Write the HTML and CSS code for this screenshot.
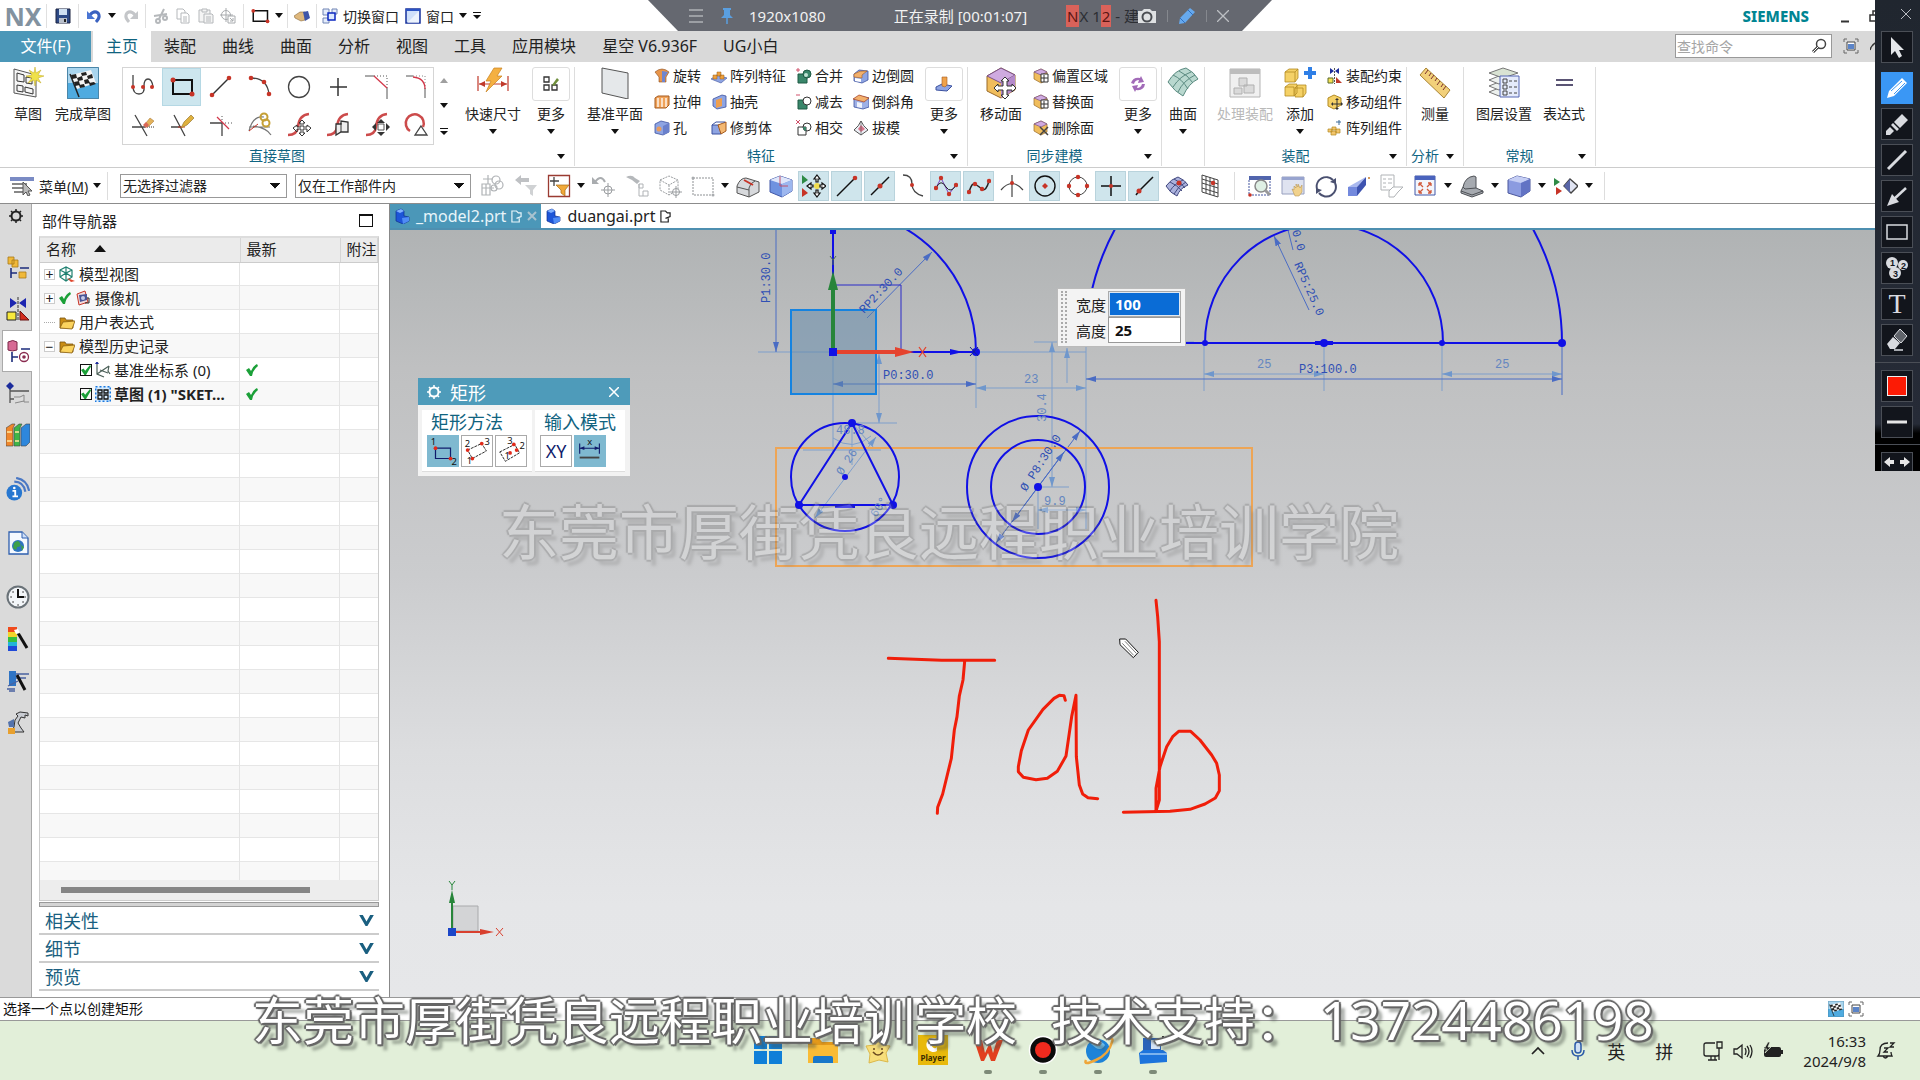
FILE: index.html
```html
<!DOCTYPE html>
<html lang="zh-CN">
<head>
  <meta charset="UTF-8">
  <meta name="viewport" content="width=device-width, initial-scale=1.0">
  <title>NX 12 - 建模</title>
  <link rel="stylesheet" href="styles.css">
</head>
<body>

<!-- Icon sprite -->
<svg class="sprite" aria-hidden="true">
  <symbol id="caret" viewBox="0 0 8 5"><path d="M0 0h8L4 5z" fill="#111"/></symbol>
  <symbol id="caret-line" viewBox="0 0 8 7"><path d="M0 0h8v1H0zM0 3h8L4 7z" fill="#111"/></symbol>
  <symbol id="save" viewBox="0 0 16 16"><path d="M1 1h14v14H1z" fill="#2e4a86" stroke="#1b2340"/><path d="M4 1h8v6H4z" fill="#cfe0f2"/><path d="M4 10h8v5H4z" fill="#b9c0cc"/><path d="M9 11h2v3H9z" fill="#222"/></symbol>
  <symbol id="undo" viewBox="0 0 16 16"><path d="M4 7q4-5 8-2 3 4-2 9" fill="none" stroke="#3b62c0" stroke-width="3"/><path d="M1 3v8h8z" fill="#4a76d4"/></symbol>
  <symbol id="redo" viewBox="0 0 16 16"><path d="M12 7Q8 2 4 5q-3 4 2 9" fill="none" stroke="#c4c6c9" stroke-width="3"/><path d="M15 3v8H7z" fill="#c4c6c9"/></symbol>
  <symbol id="cut" viewBox="0 0 16 16"><g fill="none" stroke="#b5b8bb" stroke-width="2"><path d="M11 1 6 11M1 8l13-2"/><circle cx="5" cy="13" r="2"/><circle cx="12" cy="10" r="2"/></g></symbol>
  <symbol id="copy" viewBox="0 0 16 16"><g fill="#fff" stroke="#b5b8bb"><path d="M2 1h6l2 2v8H2z"/><path d="M6 5h6l2 2v8H6z"/><path d="M8 9h4M8 11h4M8 13h4"/></g></symbol>
  <symbol id="paste" viewBox="0 0 16 16"><g fill="#f4f4f4" stroke="#b5b8bb"><path d="M1 2h11v12H1z"/><path d="M4 1h5v3H4zM6 6h8l1 1v8H6z"/><path d="M8 9h5M8 11h5M8 13h5"/></g></symbol>
  <symbol id="target" viewBox="0 0 16 16"><g fill="none" stroke="#a8abae"><circle cx="6" cy="7" r="4.500"/><path d="M6 0v14M0 7h13"/><path d="M8 8h7v7H8z" fill="#fff"/><path d="m10 10 3 3m0-3v3h-3"/></g></symbol>
  <symbol id="rect" viewBox="0 0 32 32"><path d="M7 9h19v14H7z" fill="none" stroke="#111" stroke-width="2"/><circle cx="7" cy="9" r="2.500" fill="#c73427"/><circle cx="26" cy="23" r="2.500" fill="#c73427"/></symbol>
  <symbol id="hand" viewBox="0 0 16 16"><path d="M0 8 6 4l5 0v8l-4 1-6-3z" fill="#dfb87c" stroke="#8a6a3c" stroke-width=".6"/><path d="m9 4 5-1 2 7-5 3z" fill="#3f55a8"/></symbol>
  <symbol id="switchwin" viewBox="0 0 16 16"><g fill="#e4ecfb" stroke="#7185b4"><path d="M1 1h6v6H1zM10 1h5v5h-5zM1 10h6v5H1z"/></g><path d="M6 5h7v7H6z" fill="#dce9ff" stroke="#0b27c0" stroke-width="1.500"/></symbol>
  <symbol id="window" viewBox="0 0 16 16"><path d="M1 1h14v14H1z" fill="#cfe0fa" stroke="#16309c" stroke-width="1.500"/><path d="M1 1h14v2H1z" fill="#2b53c4"/><path d="M2 15 14 3v12z" fill="#fff" opacity=".6"/></symbol>

  <symbol id="sketch" viewBox="0 0 32 32"><path d="m2 2 22 6v22L2 26z" fill="#f6f6f6" stroke="#555"/><g fill="none" stroke="#333"><path d="m5 6 7 2v7l-7-1zM14 10l6 1v6l-6-1zM5 18l6 1v6l-6-1zM13 20l8 2v5l-8-2z"/></g><path d="m23 0 1 6 5-3-3 5 6 1-6 2 3 5-5-3-1 6-1-6-6 3 4-5-6-2 6-1-3-5 5 3z" fill="#efe14a" stroke="#c1a922" stroke-width=".5"/></symbol>
  <symbol id="finish" viewBox="0 0 32 32"><path d="M0 0h32v32H0z" fill="#4fabe0"/><path d="M0 0h32v16H0z" fill="#a9d5ee"/><path d="M.5.5h31v31H.5z" fill="none" stroke="#4b86a8"/><path d="m4 8 20-5 5 13-19 6z" fill="#f5f5f5"/><g fill="#222"><path d="m4 8 5-1 1 4-5 1zM14 6l5-1 1 3-5 1zM10 11l5-2 1 4-5 1zM20 9l5-2 1 4-5 1zM7 15l5-1 1 4-5 1zM17 13l4-1 2 4-5 1zM12 18l5-1 1 3-5 1zM22 16l5-1 2 2-6 2z"/></g><path d="m3 7 9 23" stroke="#222" stroke-width="1.500"/></symbol>
  <symbol id="profile" viewBox="0 0 32 32"><path d="M6 4v11q0 8 6 8t5-8q0-7 4-7t5 8" fill="none" stroke="#444" stroke-width="1.300"/><g fill="#c73427"><circle cx="6" cy="16" r="2"/><circle cx="16" cy="16" r="2"/><circle cx="25" cy="16" r="2"/></g></symbol>
  <symbol id="line" viewBox="0 0 32 32"><path d="M7 24 24 7" stroke="#333" stroke-width="1.500"/><circle cx="7" cy="24" r="2.300" fill="#c73427"/><circle cx="24" cy="7" r="2.300" fill="#c73427"/></symbol>
  <symbol id="arc" viewBox="0 0 32 32"><path d="M7 7q16 0 18 16" fill="none" stroke="#444" stroke-width="1.300"/><g fill="#c73427"><circle cx="7" cy="7" r="2.300"/><circle cx="20" cy="11" r="2.300"/><circle cx="25" cy="23" r="2.300"/></g></symbol>
  <symbol id="circle" viewBox="0 0 32 32"><circle cx="16" cy="16" r="10.500" fill="none" stroke="#444" stroke-width="1.300"/></symbol>
  <symbol id="plus" viewBox="0 0 32 32"><path d="M16 7v18M8 16h17" stroke="#333" stroke-width="1.500"/></symbol>
  <symbol id="chamfer2" viewBox="0 0 32 32"><path d="M4 5h9M26 17v11" stroke="#555"/><path d="M13 5h13v12" fill="none" stroke="#555" stroke-dasharray="1 2"/><path d="m13 5 13 12" stroke="#d2384a" stroke-width="1.300"/></symbol>
  <symbol id="fillet2" viewBox="0 0 32 32"><path d="M6 5h7M25 17v10" stroke="#555"/><path d="M13 5h12v12" fill="none" stroke="#888" stroke-dasharray="1 2"/><path d="M13 6q12 1 12 12" fill="none" stroke="#d2384a" stroke-width="1.300"/></symbol>
  <symbol id="trim" viewBox="0 0 32 32"><path d="m8 6 12 21M5 18h13" stroke="#444" stroke-width="1.300"/><path d="M18 18h9" stroke="#333" stroke-dasharray="1 1"/><path d="m18 15 5-6 4 3-6 6z" fill="#e3b25a" stroke="#a16f2c" stroke-width=".5"/><path d="m16 16 3-3 3 3-3 3z" fill="#d96757"/></symbol>
  <symbol id="extend" viewBox="0 0 32 32"><path d="m8 6 11 21M5 18h10" stroke="#444" stroke-width="1.300"/><path d="M12 18h7" stroke="#c73427"/><path d="m15 19 3-6 7-7 3 3-7 7z" fill="#dfb13e" stroke="#8b6a22" stroke-width=".6"/></symbol>
  <symbol id="corner" viewBox="0 0 32 32"><path d="M5 14h12v13" fill="none" stroke="#444" stroke-width="1.300"/><path d="M17 14V5M17 14h10" stroke="#555" stroke-dasharray="1 2"/><path d="m12 8 12 12" stroke="#d2384a" stroke-width="1.300"/></symbol>
  <symbol id="constr" viewBox="0 0 32 32"><path d="M5 18h21M5 22Q9 6 20 8M9 17q14 2 18 9" fill="none" stroke="#777" stroke-width="1.200"/><path d="m5 22 9-7" stroke="#c73427"/><g fill="none" stroke="#c5a036" stroke-width="2"><circle cx="20" cy="8" r="3.500"/><circle cx="22" cy="14" r="3.500"/></g></symbol>
  <symbol id="movecurve" viewBox="0 0 32 32"><path d="M5 26q9 0 10-8Q16 6 26 5" fill="none" stroke="#cc4b4b" stroke-width="2.500"/><path d="m19 11 3 3h-2v4h4v-2l4 3-4 4v-3h-4v4h2l-3 3-3-3h2v-4h-4v3l-4-4 4-3v2h4v-4h-2z" fill="#fff" stroke="#333"/></symbol>
  <symbol id="offcurve" viewBox="0 0 32 32"><path d="M5 26q9 0 10-8Q16 6 26 5" fill="none" stroke="#cc4b4b" stroke-width="2.500"/><path d="M14 15h5v-3l7 1v10h-7l-5 3z" fill="#eee" stroke="#333" stroke-width="1.300"/><path d="M19 14v9" stroke="#333"/></symbol>
  <symbol id="scalecurve" viewBox="0 0 32 32"><path d="M5 26q9 0 10-8Q16 6 26 5" fill="none" stroke="#cc4b4b" stroke-width="2.500"/><path d="m20 10 4 4h-8zM20 27l4-4h-8zM11 18l4-4v8zM29 18l-4-4v8z" fill="#333"/><path d="M17 15h6v6h-6z" fill="#fff" stroke="#555"/></symbol>
  <symbol id="polycurve" viewBox="0 0 32 32"><path d="M10 22A9 9 0 1 1 23 18" fill="none" stroke="#cc4b4b" stroke-width="2.500"/><path d="m21 17 6 9H15z" fill="#fff" stroke="#444" stroke-width="1.300"/></symbol>
  <symbol id="dim" viewBox="0 0 32 32"><path d="M1 9v15M31 9v15" stroke="#c0392b" stroke-width="1.200"/><path d="M2 17h28" stroke="#c0392b"/><path d="m2 17 6-3v6zM30 17l-6-3v6z" fill="#c0392b"/><path d="M17 1h8l-5 8h5L9 25l5-11H9z" fill="#f4b042" stroke="#c9811d" stroke-width=".7"/></symbol>
  <symbol id="moresk" viewBox="0 0 24 24"><g fill="none" stroke="#333" stroke-width="1.300"><path d="M5 5h5v5H5zM5 13h5v5H5zM13 18v-5l5 0v5z"/></g><path d="m13 13 5-7 2 2-5 6z" fill="#6f8f3c"/></symbol>
  <symbol id="plane" viewBox="0 0 32 32"><path d="m3 1 26 5v26L3 26z" fill="#e5e8ea" stroke="#555"/></symbol>

  <symbol id="revolve" viewBox="0 0 16 16"><path d="M1 4Q8-2 15 4l-3 5v5H5V9z" fill="#e8954a" stroke="#8a4a1a" stroke-width=".6"/><path d="m8 3 6 1-3 5v5H8z" fill="#6f86d0"/></symbol>
  <symbol id="extrude" viewBox="0 0 16 16"><path d="M1 4 4 2h11v9l-3 3H1z" fill="#f0a35a" stroke="#a55a1e"/><path d="M4 4v9M8 4v9M12 4v9" stroke="#fff" stroke-width="1.300"/></symbol>
  <symbol id="hole" viewBox="0 0 16 16"><path d="m1 4 6-3 8 2v9l-6 3-8-2z" fill="#8ea4e2" stroke="#3c52a0" stroke-width=".8"/><path d="m9 6 6-3v9l-6 3z" fill="#6a80cc"/><circle cx="5" cy="9" r="2.500" fill="#e89c5c"/></symbol>
  <symbol id="pattern" viewBox="0 0 16 16"><path d="m0 11 6-4 10 3-6 5z" fill="#8ea4e2" stroke="#3c52a0" stroke-width=".6"/><g fill="#eda03e" stroke="#9a5c14" stroke-width=".5"><path d="M2 7h4v4H2zM6 4h4v4H6zM9 7h4v4H9z"/></g></symbol>
  <symbol id="shell" viewBox="0 0 16 16"><path d="m2 5 9-4 4 1v11l-9 2-4-3z" fill="#8ea4e2" stroke="#3c52a0" stroke-width=".8"/><path d="m5 6 6-2v8l-6 2z" fill="#ee9f4f"/></symbol>
  <symbol id="trimbody" viewBox="0 0 16 16"><path d="M1 5h9v9H1z" fill="#8ea4e2" stroke="#3c52a0"/><path d="m7 5 8-3v9l-5 3z" fill="#f4b872" stroke="#a55a1e"/><path d="M1 5 5 2h9" fill="none" stroke="#3c52a0"/></symbol>
  <symbol id="unite" viewBox="0 0 16 16"><path d="M0 2h4M2 0v4" stroke="#d0506a"/><path d="M2 6h9v9H2z" fill="#39866a" stroke="#1e5a44"/><circle cx="11" cy="6" r="4" fill="#39866a" stroke="#1e5a44"/><circle cx="10" cy="7" r="2" fill="#bfe3d4"/></symbol>
  <symbol id="subtract" viewBox="0 0 16 16"><path d="M0 1h4" stroke="#d0506a"/><path d="M2 6h9v9H2z" fill="#39866a" stroke="#1e5a44"/><circle cx="11" cy="7" r="4" fill="#fff" stroke="#333"/></symbol>
  <symbol id="intersect" viewBox="0 0 16 16"><path d="m0 0 4 4M4 0 0 4" stroke="#d0506a"/><path d="M2 7h8v8H2z" fill="#fff" stroke="#333"/><circle cx="11" cy="7" r="4" fill="none" stroke="#333"/><path d="M7 7h3v4q-3-1-3-4" fill="#39866a"/></symbol>
  <symbol id="edgeblend" viewBox="0 0 16 16"><path d="m1 6 5-4 9 1v9l-6 3-8-2z" fill="#8ea4e2" stroke="#3c52a0" stroke-width=".8"/><path d="M1 6q6-4 13-3l-5 4v3l-8-1z" fill="#f2b06c" stroke="#a55a1e" stroke-width=".6"/><path d="m2 10 6 1v3l-6-1z" fill="#fff"/></symbol>
  <symbol id="chamfer" viewBox="0 0 16 16"><path d="m1 5 6-3 9 2v9l-6 2-9-2z" fill="#9db0e6" stroke="#3c52a0" stroke-width=".8"/><path d="m0 5 6-4 10 3-5 4z" fill="#f2b06c" stroke="#a53a1e" stroke-width=".7"/><path d="m4 8 5 1v5l-5-1z" fill="#eef2fc"/></symbol>
  <symbol id="draft" viewBox="0 0 16 16"><path d="M8 1q-2 5-7 9l7 5 7-5Q10 6 8 1z" fill="#eceff5" stroke="#555"/><path d="m5 9 3-4 4 4-4 3z" fill="#d7768b"/><path d="M8 1v14" stroke="#555" stroke-width=".6"/></symbol>
  <symbol id="emboss" viewBox="0 0 24 24"><path d="m4 15 6-3 10 2-5 5-11-1z" fill="#8ea4e2" stroke="#3c52a0"/><path d="M10 5h5v8l-2 2-3-1z" fill="#efa24a" stroke="#a55a1e" stroke-width=".6"/></symbol>
  <symbol id="moveface" viewBox="0 0 32 32"><path d="m2 9 14-8 14 7v15l-14 8L2 24z" fill="#f0bd5c" stroke="#996a28"/><path d="m2 9 14-8 14 7-14 8z" fill="#cfaae0" stroke="#78518a"/><path d="m16 16 14-8v15l-14 8z" fill="#b58acb"/><path d="m20 10 4 4h-2v5h5v-2l4 4-4 4v-2h-5v5h2l-4 4-4-4h2v-5h-5v2l-4-4 4-4v2h5v-5h-2z" fill="#fff" stroke="#333"/></symbol>
  <symbol id="face" viewBox="0 0 16 16"><path d="m1 4 7-3 6 3v8l-6 3-7-4z" fill="#f0bd5c" stroke="#996a28" stroke-width=".7"/><path d="m1 4 7-3 6 3-6 3z" fill="#cfaae0" stroke="#78518a" stroke-width=".7"/><path d="M8 6h7v8H8z" fill="#fff" stroke="#333"/><path d="M8 10h7M11 7v7" stroke="#333"/></symbol>
  <symbol id="delface" viewBox="0 0 16 16"><path d="m1 4 7-3 6 3v8l-6 3-7-4z" fill="#f0bd5c" stroke="#996a28" stroke-width=".7"/><path d="m1 4 7-3 6 3-6 3z" fill="#cfaae0" stroke="#78518a" stroke-width=".7"/><path d="m7 7 8 8M15 7l-8 8" stroke="#444" stroke-width="1.500"/></symbol>
  <symbol id="sync" viewBox="0 0 24 24"><path d="M5 11q2-6 9-5l1-2 3 6-6 1 1-3q-4 0-5 4zM19 12q-1 7-9 6l-1 2-3-6 6-1-1 3q4 0 5-4z" fill="#a26bb8"/></symbol>
  <symbol id="surface" viewBox="0 0 32 32"><path d="M1 15Q8 3 19 1q8 4 12 11-9 4-15 17Q8 25 1 15z" fill="#b9d8cf" stroke="#5a8a80"/><path d="M6 8q9 4 15 14M12 4q9 4 14 12M6 20Q13 9 24 5M11 25q5-11 17-17" fill="none" stroke="#5a8a80"/></symbol>
  <symbol id="procasm" viewBox="0 0 32 32"><path d="M1 2h30v28H1z" fill="#f0f0f0" stroke="#b4b4b4"/><path d="M1 2h30v5H1z" fill="#bdbdbd"/><g fill="#dadada" stroke="#b0b0b0"><path d="M5 21h8v6H5zM10 11h8v8h-8zM15 18h10v8H15z"/></g></symbol>
  <symbol id="addcomp" viewBox="0 0 32 32"><g fill="#f5d166" stroke="#b28a22" stroke-width=".8"><path d="m1 5 4-3h9v9l-3 4H1zM1 20l4-3h8v9l-3 3H1zM11 21l3-3h8v8l-3 4h-8z"/><path d="M1 5h10v10M11 5l3-3M1 20h9v9M11 21h8v9" fill="none"/></g><path d="M26 0v12M20 6h12" stroke="#2f7fe6" stroke-width="4"/></symbol>
  <symbol id="asmcon" viewBox="0 0 16 16"><path d="M3 0v6l4-3zM12 0v6L8 3z" fill="#1c2c9c"/><path d="M7.500 0v16" stroke="#555" stroke-dasharray="2 1"/><path d="M1 10h5v5H1z" fill="#f5e154" stroke="#5a6a2a"/><path d="m9 9 6 6H9z" fill="#c03a2a"/></symbol>
  <symbol id="movecomp" viewBox="0 0 16 16"><path d="m1 4 6-3 7 3v7l-7 4-6-3z" fill="#f5d166" stroke="#b28a22"/><path d="M10 5v10M5 10h10" stroke="#333"/><path d="m10 4 2 2H8zM10 16l2-2H8zM4 10l2-2v4zM16 10l-2-2v4z" fill="#333"/></symbol>
  <symbol id="patcomp" viewBox="0 0 16 16"><path d="M12 0v5M9 2h5" stroke="#3a6a9a"/><g fill="#f3c56c" stroke="#b28a22" stroke-width=".7"><path d="M1 9h4v3H1zM5 7h4v3H5zM4 11h5v4H4zM9 9h4v4H9z"/></g></symbol>
  <symbol id="measure" viewBox="0 0 32 32"><path d="m7 1 24 22-6 8L1 8z" fill="#f2d07a" stroke="#a98434"/><path d="m9 3-3 4m6-1-2 3m5-1-3 4m6-1-2 3m5 0-3 4m6-1-2 3m5-1-3 4" stroke="#7a2f2f"/></symbol>
  <symbol id="layers" viewBox="0 0 32 32"><g fill="#edf1ee" stroke="#777"><path d="m1 25 10-4 10 4-10 4z"/><path d="m1 19 10-4 10 4-10 4z"/><path d="m1 13 10-4 10 4-10 4z"/><path d="m1 6 14-5 15 5-15 5z" fill="#d9e3d3"/></g><path d="M12 9h19v21H12z" fill="#e5ebfb" stroke="#5566b4"/><g fill="none" stroke="#444"><path d="M15 12h4v4h-4zM15 18h4v4h-4zM15 24h4v4h-4z"/><path d="M21 14h3m2 0h3M21 20h3m2 0h3M21 26h3m2 0h3"/></g></symbol>
  <symbol id="expr" viewBox="0 0 32 32"><path d="M8 13h17M8 18h17" stroke="#5a5474" stroke-width="2"/></symbol>

  <symbol id="menu" viewBox="0 0 24 20"><path d="M0 1h24v4H0z" fill="#7a8bc4"/><path d="M2 8h15M2 12h13M4 16h13" stroke="#888" stroke-width="2"/><path d="m13 6 9 9h-4l2 4-2 1-2-4-3 3z" fill="#bbb" stroke="#555"/></symbol>
  <symbol id="g-chain" viewBox="0 0 24 24"><g fill="none" stroke="#b0b3b6" stroke-width="1.200"><path d="M7 1v9M2 5h10M1 10h8v11H1zM1 14h12M5 10v11"/><circle cx="15" cy="6" r="4"/><circle cx="18" cy="11" r="4"/><circle cx="13" cy="14" r="3"/></g></symbol>
  <symbol id="g-filter" viewBox="0 0 24 24"><path d="m1 6 6-5v3h8v4H7v3z" fill="#bfc1c4"/><path d="M11 11h12l-4 5v6l-3-2v-4z" fill="#d0d2d4"/></symbol>
  <symbol id="filter" viewBox="0 0 24 24"><path d="M1.500 1.500h21v21h-21z" fill="#fff" stroke="#9a3b32" stroke-width="1.300"/><path d="M7 3v9M3 7h9" stroke="#444" stroke-width="1.300"/><path d="M9 11h13l-4 5v6l-4-3v-3z" fill="#f1a93a" stroke="#a86c16" stroke-width=".7"/></symbol>
  <symbol id="g-undo" viewBox="0 0 24 24"><path d="M3 8q6-8 10 0" fill="none" stroke="#a9acaf" stroke-width="2"/><path d="M0 3v7h7z" fill="#a9acaf"/><circle cx="16" cy="16" r="4" fill="none" stroke="#9a9da0"/><path d="M16 9v14M9 16h14" stroke="#9a9da0"/></symbol>
  <symbol id="g-tree" viewBox="0 0 24 24"><path d="M1 3q6-3 9 1l5 3-3 3-5-4z" fill="#b5b8bb"/><g fill="none" stroke="#b0b3b6"><path d="M14 10h4v4h-4zM18 17h5v5h-5zM14 10v12h4"/></g></symbol>
  <symbol id="g-cube" viewBox="0 0 24 24"><g fill="none" stroke="#9a9da0"><path d="m2 6 9-4 9 4v10l-9 5-9-5zM2 6l9 5 9-5M11 11v10" stroke-dasharray="2 1"/><circle cx="18" cy="18" r="3.500" fill="#fff"/><path d="M18 12v12M12 18h12"/></g></symbol>
  <symbol id="g-rect" viewBox="0 0 24 24"><path d="M2 4h20v17H2z" fill="none" stroke="#8d9093" stroke-dasharray="2 1"/><circle cx="2" cy="4" r="1.500" fill="#a9acaf"/><circle cx="22" cy="21" r="1.500" fill="#a9acaf"/></symbol>
  <symbol id="body1" viewBox="0 0 24 24"><path d="M1 12q3-8 9-8l13 4v10l-10 5-12-4z" fill="#d7d9dc" stroke="#555"/><path d="M13 23v-9q1-5 6-7M1 13l12 3" fill="none" stroke="#555"/><path d="m8 6 9 5" stroke="#c73427" stroke-width="2"/></symbol>
  <symbol id="body2" viewBox="0 0 24 24"><path d="m1 6 10-4 12 4v11l-10 6-12-5z" fill="#6f92e0" stroke="#4258a8"/><path d="m1 6 10-4 12 4-10 4z" fill="#dfe6fa"/><path d="m13 10 10-4v11l-10 6z" fill="#9db7ef"/><path d="M11 2v10h8" fill="none" stroke="#c0506a"/></symbol>
  <symbol id="snap" viewBox="0 0 24 24"><path d="M0 1v9l6-4z" fill="#2e8a45"/><path d="M0 14v9l6-4z" fill="#c73427"/><circle cx="15" cy="12" r="3" fill="#f0dc4e"/><g fill="#fff" stroke="#111" stroke-width="1.200"><path d="m15 1 3 4h-2v3h-2V5h-2zM15 23l3-4h-2v-3h-2v3h-2zM5 12l4-3v2h2v2H9v2zM24 12l-4-3v2h-2v2h2v2z"/></g></symbol>
  <symbol id="s-end" viewBox="0 0 24 24"><path d="M2 22 20 4" stroke="#111" stroke-width="1.500"/><circle cx="20" cy="4" r="2.300" fill="#c73427"/></symbol>
  <symbol id="s-mid" viewBox="0 0 24 24"><path d="M3 21 21 3" stroke="#111" stroke-width="1.500"/><circle cx="12" cy="12" r="2.500" fill="#c73427"/></symbol>
  <symbol id="s-ctrl" viewBox="0 0 24 24"><path d="M2 1q9 0 9 9t11 12" fill="none" stroke="#444" stroke-width="1.300"/><circle cx="11" cy="11" r="2" fill="#c73427"/></symbol>
  <symbol id="s-poly" viewBox="0 0 24 24"><path d="m2 14 5-10 8 16 7-9" fill="none" stroke="#7a3fc0"/><path d="M2 14Q7 4 12 13q5 7 10-2" fill="none" stroke="#222"/><g fill="#c73427"><circle cx="2" cy="14" r="2.200"/><circle cx="7" cy="4" r="2.200"/><circle cx="15" cy="20" r="2.200"/><circle cx="22" cy="11" r="2.200"/></g></symbol>
  <symbol id="s-spl" viewBox="0 0 24 24"><path d="M2 18Q5 8 8 10t7 5 7-8" fill="none" stroke="#222" stroke-width="1.500"/><g fill="#c73427"><circle cx="2" cy="18" r="2.200"/><circle cx="8" cy="10" r="2.200"/><circle cx="15" cy="15" r="2.200"/><circle cx="22" cy="7" r="2.200"/></g></symbol>
  <symbol id="s-int" viewBox="0 0 24 24"><path d="M12 1v22M1 16Q12 3 23 16" fill="none" stroke="#444" stroke-width="1.200"/><circle cx="12" cy="9" r="2" fill="#c73427"/></symbol>
  <symbol id="s-cen" viewBox="0 0 24 24"><circle cx="12" cy="12" r="10" fill="none" stroke="#111" stroke-width="1.400"/><path d="m12 9 3 3-3 3-3-3z" fill="#c73427"/></symbol>
  <symbol id="s-quad" viewBox="0 0 24 24"><circle cx="12" cy="12" r="9" fill="none" stroke="#444"/><g fill="#c73427"><circle cx="12" cy="3" r="2.200"/><circle cx="12" cy="21" r="2.200"/><circle cx="3" cy="12" r="2.200"/><circle cx="21" cy="12" r="2.200"/></g></symbol>
  <symbol id="s-pt" viewBox="0 0 24 24"><path d="M12 2v20M2 12h20" stroke="#111" stroke-width="1.500"/><circle cx="12" cy="12" r="2" fill="#c73427"/></symbol>
  <symbol id="s-on" viewBox="0 0 24 24"><path d="M7 17 21 3M7 17l-3 4" stroke="#111" stroke-width="1.500"/><circle cx="7" cy="17" r="2.500" fill="#c73427"/></symbol>
  <symbol id="s-face" viewBox="0 0 24 24"><path d="M1 12Q6 5 13 3q7 3 10 8-8 3-11 11Q5 19 1 12z" fill="#aab1dc" stroke="#444a80"/><path d="M5 8q7 3 12 9M9 5q7 3 11 9M5 17q4-7 13-11M9 20q4-8 12-12" fill="none" stroke="#444a80"/><circle cx="14" cy="9" r="2.500" fill="#c73427"/></symbol>
  <symbol id="s-grid" viewBox="0 0 24 24"><path d="m4 1 16 5v17L4 18zM4 5l16 5M4 9l16 5M4 14l16 5M8 2v17M12 3v18M16 5v17" fill="none" stroke="#444"/><circle cx="15" cy="9" r="2.200" fill="#c73427"/></symbol>
  <symbol id="v-zoom" viewBox="0 0 24 24"><path d="M1 2h22v4H1z" fill="#5165ad"/><path d="M1 6v15h21V6" fill="none" stroke="#4456a0" stroke-dasharray="2 1"/><circle cx="13" cy="12" r="6" fill="#dff0e4" stroke="#888" stroke-width="1.500"/><path d="m17 16 5 5" stroke="#999" stroke-width="3"/><circle cx="2" cy="21" r="1.800" fill="#c73427"/></symbol>
  <symbol id="v-pan" viewBox="0 0 24 24"><path d="M1 3h22v17H1z" fill="#dfe3f0" stroke="#98a0bf"/><path d="M1 3h22v3H1z" fill="#98a4cf"/><path d="m11 15 2 1v-4l2 2v-4l2 3v-3l2 4 2-3v7l-3 4h-4z" fill="#f1d28d" stroke="#b08a40" stroke-width=".5"/></symbol>
  <symbol id="v-rot" viewBox="0 0 24 24"><path d="M3 15A9.500 9.500 0 0 1 19 6M21 9A9.500 9.500 0 0 1 5 19" fill="none" stroke="#4a5070" stroke-width="2"/><path d="m16 8 6-4v6zM8 16l-6 4v-6z" fill="#4a5070"/></symbol>
  <symbol id="v-persp" viewBox="0 0 24 24"><path d="M1 13h9v9H1z" fill="#7389dd"/><path d="M1 13 17 4l2-1-9 10z" fill="#a9b8ef"/><path d="m10 13 9-10v8l-9 11z" fill="#3d53b0"/><circle cx="22" cy="4" r="1" fill="#c77a27"/></symbol>
  <symbol id="v-list" viewBox="0 0 24 24"><g fill="#fff" stroke="#b0b3b6"><path d="M1 1h13v15H1z"/><path d="M3 5h3m2 0h4M3 9h3m2 0h4M3 13h3M9 17l4-4h10l-5 5-4 5H9z"/></g></symbol>
  <symbol id="v-fit" viewBox="0 0 24 24"><path d="M2 2h20v19H2z" fill="#f3f5fb" stroke="#4258a8"/><path d="M2 2h20v4H2z" fill="#4a63bd"/><path d="m6 9 4 4M18 9l-4 4M6 19l4-4M18 19l-4-4M6 9h3M6 9v3M18 9h-3M18 9v3M6 19h3M6 19v-3M18 19h-3M18 19v-3" stroke="#d15a3c" stroke-width="1.300"/></symbol>
  <symbol id="v-orient" viewBox="0 0 24 24"><path d="M3 13Q5 3 14 2l2 1v11l7 3v2l-11 4-11-4v-2z" fill="#a6aab0" stroke="#4e5156"/><path d="m3 13 2 2 11-1M1 17l11 4 11-4" fill="none" stroke="#4e5156"/></symbol>
  <symbol id="v-cube" viewBox="0 0 24 24"><path d="m1 6 9-4 13 3v12l-9 6-13-4z" fill="#8b9be0" stroke="#4a569c"/><path d="m1 6 9-4 13 3-9 4z" fill="#c5cef4"/><path d="m14 9 9-4v12l-9 6z" fill="#6273c4"/></symbol>
  <symbol id="v-sect" viewBox="0 0 24 24"><path d="M0 4v8l6-4z" fill="#2e8a45"/><path d="M2 13v8l6-4z" fill="#c73427"/><path d="m16 5 8 7-7 7-7-7z" fill="#e0e4f2" stroke="#444" stroke-width="1.400"/><path d="M16 5v14l-6-7z" fill="#5966a8"/></symbol>

  <symbol id="gear" viewBox="0 0 16 16"><g fill="none" stroke="currentColor"><circle cx="8" cy="8" r="4.500" stroke-width="2"/><path d="M8 1v3M8 12v3M1 8h3M12 8h3M3 3l2 2M11 11l2 2M13 3l-2 2M3 13l2-2" stroke-width="1.500"/></g></symbol>
  <symbol id="r-asm" viewBox="0 0 24 24"><g fill="#f0b93a" stroke="#a87818" stroke-width=".8"><path d="M2 2h6v7H2zM6 5h6v7H6zM13 17h7v6h-7z"/></g><path d="M5 13v10M5 18h6M14 13h9" stroke="#1c2c7c" stroke-width="1.600"/></symbol>
  <symbol id="r-con" viewBox="0 0 24 24"><path d="M4 1v10l7-5zM20 1v10l-7-5z" fill="#1c25b0"/><path d="M12 0v24" stroke="#333" stroke-dasharray="3 1"/><path d="M1 15h9v8H1z" fill="#f8e93c" stroke="#222"/><path d="m14 14 9 9h-9z" fill="#d22c1e" stroke="#611"/></symbol>
  <symbol id="r-part" viewBox="0 0 24 24"><path d="M1 3q5-3 9 0v8q-5 2-9 0z" fill="#d76a94" stroke="#7a2848"/><path d="M5 13v10M5 18h6M14 10h9" stroke="#1c2c7c" stroke-width="1.600"/><circle cx="17" cy="18" r="4.500" fill="none" stroke="#8a2c50" stroke-width="1.300"/><circle cx="17" cy="18" r="1.800" fill="#8a2c50"/></symbol>
  <symbol id="r-hist" viewBox="0 0 24 24"><path d="m4 1 4 4-4 4-4-4z" fill="#1c2c9c"/><path d="M4 8v14M4 10h19M4 18h4" stroke="#555" stroke-width="1.300"/><path d="M8 16h6l4-2v7h5M9 22l9-2" fill="#ddd" stroke="#888"/></symbol>
  <symbol id="r-books" viewBox="0 0 24 24"><g stroke="#444" stroke-width=".6"><path d="m0 5 6-4h3L7 5v18H0z" fill="#f0872c"/><path d="m8 5 5-4h3l-2 4v18H8z" fill="#3eb548"/><path d="m15 5 5-4h4v18l-4 4h-5z" fill="#2e87dc"/></g><path d="M1 9h5M9 9h4M1 18h5M9 18h4" stroke="#ffe9a0" stroke-width="1.500"/></symbol>
  <symbol id="r-info" viewBox="0 0 26 26"><circle cx="9" cy="17" r="8.500" fill="#2777d0"/><path d="M7 15h3v6M7 21h6" stroke="#fff" stroke-width="2" fill="none"/><circle cx="9" cy="12" r="1.400" fill="#fff"/><path d="M9 5q10 0 12 11M11 1q12 2 14 14" fill="none" stroke="#4a78c4" stroke-width="2.300"/></symbol>
  <symbol id="r-page" viewBox="0 0 24 24"><path d="M3 1h13l6 6v16H3z" fill="#f5f9ff" stroke="#2e5fae" stroke-width="1.300"/><path d="M16 1v6h6" fill="#cfe0fa" stroke="#2e5fae"/><circle cx="12" cy="15" r="6" fill="#2e74c0"/><path d="M8 12q4-4 6 0t-3 4q0 5-4 1zM15 14l3 2-2 4z" fill="#3ea04a"/></symbol>
  <symbol id="r-clock" viewBox="0 0 24 24"><circle cx="12" cy="12" r="10.500" fill="#f3f6f9" stroke="#6a7278" stroke-width="2"/><path d="M12 4v8h6" fill="none" stroke="#111" stroke-width="2"/><path d="M12 20h.1M5 12h.1M19 12h.1M7 7h.1M17 17h.1M7 17h.1M17 7h.1" stroke="#333" stroke-width="1.500" stroke-linecap="round"/></symbol>
  <symbol id="r-color" viewBox="0 0 24 24"><path d="M2 0h9v5H2z" fill="#f04a1c"/><path d="M2 5h9v5H2z" fill="#f3d52a"/><path d="M2 10h9v5H2z" fill="#37c03c"/><path d="M2 15h9v4H2z" fill="#22b4d8"/><path d="M2 19h9v5H2z" fill="#1f49d8"/><path d="m12 6 9 15" stroke="#111" stroke-width="3"/><path d="m8 3 4-1 2 4-4 1z" fill="#fff"/></symbol>
  <symbol id="r-wand" viewBox="0 0 24 24"><path d="M3 2h7v15H3z" fill="#2f74c4"/><path d="M10 5h13M10 9h10M1 20h8M3 22h6M2 17l10-5" stroke="#4a62a0" stroke-width="1.300"/><path d="m11 6 8 15" stroke="#111" stroke-width="3"/></symbol>
  <symbol id="r-robot" viewBox="0 0 24 24"><path d="m10 3 4-2 8 1v3l-3-1v3l-4-1-3 6 3 5 3 4H5l3-5 1-7 3-4z" fill="#c9ccd2" stroke="#333"/><path d="M2 17h7v6H2z" fill="#e8a02e"/><path d="m2 11 6-3v8H3z" fill="#5372ac"/></symbol>

  <symbol id="n-view" viewBox="0 0 16 16"><path d="m1 4 6-3 6 3v7l-6 4-6-4zM1 4l6 3 6-3M7 1v13M1 11l6-4 6 4" fill="none" stroke="#1f8070" stroke-width="1.200"/><path d="m8 12 8 3-4 1z" fill="#e0472e"/></symbol>
  <symbol id="tick" viewBox="0 0 12 12"><path d="m0 6 3-2 2 3q2-5 6-7l1 2Q7 6 6 12H4z" fill="#1ba038"/></symbol>
  <symbol id="n-cam" viewBox="0 0 16 16"><path d="m2 4 8-3 3 11-9 3z" fill="#f2dada" stroke="#c73427"/><path d="m4 5 8-1v6l-7 2z" fill="#4a5596"/><circle cx="8" cy="8" r="2" fill="#c5cae8"/><path d="M12 8h2v5h-4" fill="none" stroke="#222"/></symbol>
  <symbol id="folder" viewBox="0 0 16 16"><path d="M1 4h5l1 2h7v8H1z" fill="#c98c14" stroke="#7a5410" stroke-width=".8"/><path d="m4 8 12-1-3 8-12-1z" fill="#fbd35e" stroke="#8a6010" stroke-width=".8"/></symbol>
  <symbol id="n-csys" viewBox="0 0 16 16"><path d="M2 1v11l7 3M2 12l12-8M14 4l-1 5 2 3M5 8l8 3" fill="none" stroke="#4c6058" stroke-width="1.200"/><path d="M0 2h4L2-1z" fill="#1c2c9c"/></symbol>
  <symbol id="n-sketch" viewBox="0 0 16 16"><path d="M.5.500h15v15H.5z" fill="#d6ecff" stroke="#1a78e0" stroke-width="2" stroke-dasharray="2 2"/><path d="M3 4h4v3H3zM9 4h4v3H9zM3 9h4v4H3zM9 9h4v4H9z" fill="none" stroke="#111" stroke-width="1.300"/></symbol>
  <symbol id="part" viewBox="0 0 16 16"><path d="m1 3 5-2 3 2v5l5 1v4l-6 3-7-3z" fill="#1d55d8" stroke="#0e2f8c" stroke-width=".7"/><path d="m1 3 5-2 3 2-4 2z" fill="#7fb0ff"/><path d="m7 10 7-1v4l-6 3z" fill="#4f8cf5"/></symbol>
  <symbol id="modified" viewBox="0 0 12 14"><path d="M9 9v4H1V1h5l2 2h3v4L6 9" fill="none" stroke="currentColor" stroke-width="1.300"/></symbol>
  <symbol id="chev" viewBox="0 0 16 12"><path d="M0 0h4l4 7 4-7h4L9 12H7z" fill="#1a5f80"/></symbol>

  <symbol id="fs" viewBox="0 0 16 16"><path d="M1 4V1h3M12 1h3v3M15 12v3h-3M4 15H1v-3" fill="none" stroke="#666"/><path d="M4 4h8v8H4z" fill="#fff" stroke="#444"/><path d="M5 6h6v5H5z" fill="#5b84c8"/></symbol>
  <symbol id="search" viewBox="0 0 16 16"><circle cx="10" cy="6" r="4.500" fill="none" stroke="#444" stroke-width="1.500"/><path d="m7 9-5 5" stroke="#444" stroke-width="3"/><path d="m7 9-5 5" stroke="#fff"/></symbol>
</svg>

<div class="app">

  <!-- Title bar -->
  <header class="titlebar">
    <div class="tb-group brand">NX</div>
    <div class="tb-group w32"><button class="ic" aria-label="保存"><svg class="i16"><use href="#save"/></svg></button></div>
    <div class="tb-group w67">
      <button class="ic" aria-label="撤销"><svg class="i16"><use href="#undo"/></svg></button>
      <button class="ic" aria-label="撤销列表"><svg class="icaret"><use href="#caret"/></svg></button>
      <button class="ic" aria-label="重做"><svg class="i16"><use href="#redo"/></svg></button>
    </div>
    <div class="tb-group w98">
      <button class="ic" aria-label="剪切"><svg class="i16"><use href="#cut"/></svg></button>
      <button class="ic" aria-label="复制"><svg class="i16"><use href="#copy"/></svg></button>
      <button class="ic" aria-label="粘贴"><svg class="i16"><use href="#paste"/></svg></button>
      <button class="ic" aria-label="定向"><svg class="i16"><use href="#target"/></svg></button>
    </div>
    <div class="tb-group w44">
      <button class="ic" aria-label="矩形"><svg class="i24"><use href="#rect"/></svg></button>
      <button class="ic" aria-label="更多命令"><svg class="icaret"><use href="#caret"/></svg></button>
    </div>
    <div class="tb-group w29"><button class="ic" aria-label="触控"><svg class="i16"><use href="#hand"/></svg></button></div>
    <div class="tb-windows">
      <button class="ic"><svg class="i16"><use href="#switchwin"/></svg><span>切换窗口</span></button>
      <button class="ic"><svg class="i16"><use href="#window"/></svg><span>窗口</span><svg class="icaret"><use href="#caret"/></svg></button>
      <button class="ic" aria-label="工具条选项"><svg class="icaret7"><use href="#caret-line"/></svg></button>
    </div>
    <div class="siemens">SIEMENS</div>
    <div class="winctl">
      <svg width="10" height="14"><path d="M0 12.500h8" stroke="#333" stroke-width="2"/></svg>
      <svg width="14" height="14"><path d="M4 6V2h9v4M1 6h9v6H1z" fill="none" stroke="#333" stroke-width="1.500"/></svg>
    </div>
  </header>

  <!-- Ribbon tabs -->
  <nav class="tabs">
    <button class="tab file">文件(F)</button>
    <button class="tab active">主页</button>
    <button class="tab">装配</button>
    <button class="tab">曲线</button>
    <button class="tab">曲面</button>
    <button class="tab">分析</button>
    <button class="tab">视图</button>
    <button class="tab">工具</button>
    <button class="tab">应用模块</button>
    <button class="tab">星空 V6.936F</button>
    <button class="tab">UG小白</button>
    <div class="search">
      <input type="text" placeholder="查找命令" aria-label="查找命令">
      <svg class="i16"><use href="#search"/></svg>
    </div>
    <svg class="i16 fs"><use href="#fs"/></svg>
    <svg class="i16 pin"><path d="M0 12q2-7 8-8" fill="none" stroke="#333" stroke-width="1.500"/></svg>
  </nav>

  <!-- Ribbon -->
  <section class="ribbon">
    <div class="rg">
      <div class="rg-body">
        <button class="big"><svg class="i32"><use href="#sketch"/></svg><span>草图</span></button>
        <button class="big"><svg class="i32"><use href="#finish"/></svg><span>完成草图</span></button>
        <div class="gallery-wrap">
          <div class="gallery">
            <button aria-label="轮廓"><svg class="i32"><use href="#profile"/></svg></button>
            <button class="on" aria-label="矩形"><svg class="i32"><use href="#rect"/></svg></button>
            <button aria-label="直线"><svg class="i32"><use href="#line"/></svg></button>
            <button aria-label="圆弧"><svg class="i32"><use href="#arc"/></svg></button>
            <button aria-label="圆"><svg class="i32"><use href="#circle"/></svg></button>
            <button aria-label="点"><svg class="i32"><use href="#plus"/></svg></button>
            <button aria-label="倒斜角"><svg class="i32"><use href="#chamfer2"/></svg></button>
            <button aria-label="圆角"><svg class="i32"><use href="#fillet2"/></svg></button>
            <button aria-label="快速修剪"><svg class="i32"><use href="#trim"/></svg></button>
            <button aria-label="快速延伸"><svg class="i32"><use href="#extend"/></svg></button>
            <button aria-label="制作拐角"><svg class="i32"><use href="#corner"/></svg></button>
            <button aria-label="几何约束"><svg class="i32"><use href="#constr"/></svg></button>
            <button aria-label="移动曲线"><svg class="i32"><use href="#movecurve"/></svg></button>
            <button aria-label="偏置移动曲线"><svg class="i32"><use href="#offcurve"/></svg></button>
            <button aria-label="缩放曲线"><svg class="i32"><use href="#scalecurve"/></svg></button>
            <button aria-label="多边形"><svg class="i32"><use href="#polycurve"/></svg></button>
          </div>
          <div class="gallery-nav">
            <button class="ic dim" aria-label="上一行"><svg class="icaret up"><use href="#caret"/></svg></button>
            <button class="ic" aria-label="下一行"><svg class="icaret"><use href="#caret"/></svg></button>
            <button class="ic" aria-label="展开"><svg class="icaret7"><use href="#caret-line"/></svg></button>
          </div>
        </div>
        <button class="big"><svg class="i32"><use href="#dim"/></svg><span>快速尺寸</span><svg class="icaret"><use href="#caret"/></svg></button>
        <button class="big more"><i><svg class="i24"><use href="#moresk"/></svg></i><span>更多</span><svg class="icaret"><use href="#caret"/></svg></button>
      </div>
      <div class="rg-foot"><span>直接草图</span><svg class="icaret"><use href="#caret"/></svg></div>
    </div>

    <div class="rg">
      <div class="rg-body">
        <button class="big"><svg class="i32"><use href="#plane"/></svg><span>基准平面</span><svg class="icaret"><use href="#caret"/></svg></button>
        <div class="smalls">
          <button class="sm"><svg class="i16"><use href="#revolve"/></svg>旋转</button>
          <button class="sm"><svg class="i16"><use href="#extrude"/></svg>拉伸</button>
          <button class="sm"><svg class="i16"><use href="#hole"/></svg>孔</button>
          <button class="sm"><svg class="i16"><use href="#pattern"/></svg>阵列特征</button>
          <button class="sm"><svg class="i16"><use href="#shell"/></svg>抽壳</button>
          <button class="sm"><svg class="i16"><use href="#trimbody"/></svg>修剪体</button>
          <button class="sm"><svg class="i16"><use href="#unite"/></svg>合并</button>
          <button class="sm"><svg class="i16"><use href="#subtract"/></svg>减去</button>
          <button class="sm"><svg class="i16"><use href="#intersect"/></svg>相交</button>
          <button class="sm"><svg class="i16"><use href="#edgeblend"/></svg>边倒圆</button>
          <button class="sm"><svg class="i16"><use href="#chamfer"/></svg>倒斜角</button>
          <button class="sm"><svg class="i16"><use href="#draft"/></svg>拔模</button>
        </div>
        <button class="big more"><i><svg class="i24"><use href="#emboss"/></svg></i><span>更多</span><svg class="icaret"><use href="#caret"/></svg></button>
      </div>
      <div class="rg-foot"><span>特征</span><svg class="icaret"><use href="#caret"/></svg></div>
    </div>

    <div class="rg">
      <div class="rg-body">
        <button class="big"><svg class="i32"><use href="#moveface"/></svg><span>移动面</span></button>
        <div class="smalls">
          <button class="sm"><svg class="i16"><use href="#face"/></svg>偏置区域</button>
          <button class="sm"><svg class="i16"><use href="#face"/></svg>替换面</button>
          <button class="sm"><svg class="i16"><use href="#delface"/></svg>删除面</button>
        </div>
        <button class="big more"><i><svg class="i24"><use href="#sync"/></svg></i><span>更多</span><svg class="icaret"><use href="#caret"/></svg></button>
      </div>
      <div class="rg-foot"><span>同步建模</span><svg class="icaret"><use href="#caret"/></svg></div>
    </div>

    <div class="rg narrow">
      <div class="rg-body">
        <button class="big"><svg class="i32"><use href="#surface"/></svg><span>曲面</span><svg class="icaret"><use href="#caret"/></svg></button>
      </div>
    </div>

    <div class="rg">
      <div class="rg-body">
        <button class="big" disabled><svg class="i32"><use href="#procasm"/></svg><span>处理装配</span></button>
        <button class="big"><svg class="i32"><use href="#addcomp"/></svg><span>添加</span><svg class="icaret"><use href="#caret"/></svg></button>
        <div class="smalls">
          <button class="sm"><svg class="i16"><use href="#asmcon"/></svg>装配约束</button>
          <button class="sm"><svg class="i16"><use href="#movecomp"/></svg>移动组件</button>
          <button class="sm"><svg class="i16"><use href="#patcomp"/></svg>阵列组件</button>
        </div>
      </div>
      <div class="rg-foot"><span>装配</span><svg class="icaret"><use href="#caret"/></svg></div>
    </div>

    <div class="rg medium">
      <div class="rg-body">
        <button class="big"><svg class="i32"><use href="#measure"/></svg><span>测量</span></button>
      </div>
      <div class="rg-foot"><span>分析</span><svg class="icaret"><use href="#caret"/></svg></div>
    </div>

    <div class="rg last">
      <div class="rg-body">
        <button class="big"><svg class="i32"><use href="#layers"/></svg><span>图层设置</span></button>
        <button class="big"><svg class="i32"><use href="#expr"/></svg><span>表达式</span></button>
      </div>
      <div class="rg-foot"><span>常规</span><svg class="icaret"><use href="#caret"/></svg></div>
    </div>
  </section>

  <!-- Selection bar -->
  <section class="selbar">
    <button class="menu-btn"><svg class="imenu"><use href="#menu"/></svg><span>菜单(<u>M</u>)</span><svg class="icaret"><use href="#caret"/></svg></button>
    <select class="dd" aria-label="类型过滤器"><option>无选择过滤器</option></select>
    <select class="dd wide" aria-label="选择范围"><option>仅在工作部件内</option></select>
    <div class="tools">
      <button aria-label="选择链"><svg class="i24"><use href="#g-chain"/></svg></button>
      <button aria-label="重置过滤器"><svg class="i24"><use href="#g-filter"/></svg></button>
      <button aria-label="常规选择过滤器"><svg class="i24"><use href="#filter"/></svg></button>
      <button class="cr" aria-label="过滤器选项"><svg class="icaret"><use href="#caret"/></svg></button>
      <button aria-label="撤销选择"><svg class="i24"><use href="#g-undo"/></svg></button>
      <button aria-label="查找"><svg class="i24"><use href="#g-tree"/></svg></button>
      <button aria-label="体选择"><svg class="i24"><use href="#g-cube"/></svg></button>
      <button aria-label="矩形选择"><svg class="i24"><use href="#g-rect"/></svg></button>
      <button class="cr" aria-label="选择方式"><svg class="icaret"><use href="#caret"/></svg></button>
      <button aria-label="高亮隐藏边"><svg class="i24"><use href="#body1"/></svg></button>
      <button aria-label="选择壁面"><svg class="i24"><use href="#body2"/></svg></button>
      <button class="on" aria-label="启用捕捉点"><svg class="i24"><use href="#snap"/></svg></button>
      <button class="on" aria-label="端点"><svg class="i24"><use href="#s-end"/></svg></button>
      <button class="on" aria-label="中点"><svg class="i24"><use href="#s-mid"/></svg></button>
      <button aria-label="控制点"><svg class="i24"><use href="#s-ctrl"/></svg></button>
      <button class="on" aria-label="极点"><svg class="i24"><use href="#s-poly"/></svg></button>
      <button class="on" aria-label="定义点"><svg class="i24"><use href="#s-spl"/></svg></button>
      <button aria-label="交点"><svg class="i24"><use href="#s-int"/></svg></button>
      <button class="on" aria-label="圆弧中心"><svg class="i24"><use href="#s-cen"/></svg></button>
      <button aria-label="象限点"><svg class="i24"><use href="#s-quad"/></svg></button>
      <button class="on" aria-label="现有点"><svg class="i24"><use href="#s-pt"/></svg></button>
      <button class="on" aria-label="点在曲线上"><svg class="i24"><use href="#s-on"/></svg></button>
      <button aria-label="点在面上"><svg class="i24"><use href="#s-face"/></svg></button>
      <button aria-label="有界栅格上的点"><svg class="i24"><use href="#s-grid"/></svg></button>
    </div>
    <div class="tools view-tools">
      <button aria-label="缩放"><svg class="i24"><use href="#v-zoom"/></svg></button>
      <button aria-label="平移"><svg class="i24"><use href="#v-pan"/></svg></button>
      <button aria-label="旋转"><svg class="i24"><use href="#v-rot"/></svg></button>
      <button aria-label="透视"><svg class="i24"><use href="#v-persp"/></svg></button>
      <button aria-label="视图列表"><svg class="i24"><use href="#v-list"/></svg></button>
      <button aria-label="适合窗口"><svg class="i24"><use href="#v-fit"/></svg></button>
      <button class="cr" aria-label="适合窗口选项"><svg class="icaret"><use href="#caret"/></svg></button>
      <button aria-label="定向视图"><svg class="i24"><use href="#v-orient"/></svg></button>
      <button class="cr" aria-label="定向视图选项"><svg class="icaret"><use href="#caret"/></svg></button>
      <button aria-label="渲染样式"><svg class="i24"><use href="#v-cube"/></svg></button>
      <button class="cr" aria-label="渲染样式选项"><svg class="icaret"><use href="#caret"/></svg></button>
      <button aria-label="剪切截面"><svg class="i24"><use href="#v-sect"/></svg></button>
      <button class="cr" aria-label="截面选项"><svg class="icaret"><use href="#caret"/></svg></button>
    </div>
  </section>

  <main class="main">
    <!-- Resource bar -->
    <aside class="resbar">
      <button class="gear" aria-label="资源条选项"><svg class="i16"><use href="#gear"/></svg></button>
      <button aria-label="装配导航器"><svg class="i24"><use href="#r-asm"/></svg></button>
      <button aria-label="约束导航器"><svg class="i24"><use href="#r-con"/></svg></button>
      <button class="current" aria-label="部件导航器"><svg class="i24"><use href="#r-part"/></svg></button>
      <button aria-label="重用库"><svg class="i24"><use href="#r-hist"/></svg></button>
      <button aria-label="HD3D 工具"><svg class="i24"><use href="#r-books"/></svg></button>
      <button class="spaced" aria-label="信息"><svg class="i24"><use href="#r-info"/></svg></button>
      <button class="spaced" aria-label="Web 浏览器"><svg class="i24"><use href="#r-page"/></svg></button>
      <button class="spaced" aria-label="历史记录"><svg class="i24"><use href="#r-clock"/></svg></button>
      <button aria-label="系统材料"><svg class="i24"><use href="#r-color"/></svg></button>
      <button aria-label="加工向导"><svg class="i24"><use href="#r-wand"/></svg></button>
      <button aria-label="角色"><svg class="i24"><use href="#r-robot"/></svg></button>
    </aside>

    <!-- Part navigator -->
    <aside class="nav">
      <div class="nav-title"><span>部件导航器</span><button class="maxi" aria-label="最大化"></button></div>
      <div class="tree-box">
        <div class="tree-rows">
          <table class="tree">
            <colgroup><col class="c1"><col class="c2"><col class="c3"></colgroup>
            <thead>
              <tr><th>名称<svg class="sort" viewBox="0 0 12 7"><path d="M0 7h12L6 0z" fill="#111"/></svg></th><th>最新</th><th>附注</th></tr>
            </thead>
            <tbody>
              <tr><td><div class="node"><span class="ex">+</span><svg class="i16"><use href="#n-view"/></svg>模型视图</div></td><td></td><td></td></tr>
              <tr><td><div class="node"><span class="ex">+</span><svg class="i12"><use href="#tick"/></svg><svg class="i16"><use href="#n-cam"/></svg>摄像机</div></td><td></td><td></td></tr>
              <tr><td><div class="node"><span class="ex none"></span><svg class="i16"><use href="#folder"/></svg>用户表达式</div></td><td></td><td></td></tr>
              <tr><td><div class="node"><span class="ex">−</span><svg class="i16"><use href="#folder"/></svg>模型历史记录</div></td><td></td><td></td></tr>
              <tr><td><div class="node sub"><input type="checkbox" id="csys" checked><svg class="i16"><use href="#n-csys"/></svg><label for="csys">基准坐标系 (0)</label></div></td><td><svg class="i12 state"><use href="#tick"/></svg></td><td></td></tr>
              <tr><td><div class="node sub"><input type="checkbox" id="sk1" checked><svg class="i16"><use href="#n-sketch"/></svg><label for="sk1"><b>草图 (1) "SKET...</b></label></div></td><td><svg class="i12 state"><use href="#tick"/></svg></td><td></td></tr>
            </tbody>
          </table>
        </div>
        <div class="hscroll"><div class="thumb"></div></div>
      </div>
      <div class="splitter"></div>
      <button class="fold"><span>相关性</span><svg class="ichev"><use href="#chev"/></svg></button>
      <button class="fold"><span>细节</span><svg class="ichev"><use href="#chev"/></svg></button>
      <button class="fold"><span>预览</span><svg class="ichev"><use href="#chev"/></svg></button>
    </aside>

    <!-- Graphics window -->
    <section class="gfx">
      <div class="docs">
        <button class="doc active"><svg class="i16"><use href="#part"/></svg><span>_model2.prt</span><svg class="imod"><use href="#modified"/></svg><svg class="ix" viewBox="0 0 10 10"><path d="m1 1 8 8M9 1 1 9" stroke="#a9c3cf" stroke-width="2"/></svg></button>
        <button class="doc"><svg class="i16"><use href="#part"/></svg><span>duangai.prt</span><svg class="imod"><use href="#modified"/></svg></button>
      </div>
      <div class="canvas">
        <svg class="drawing" aria-label="草图">
          <defs>
            <marker id="ah" viewBox="0 0 10 6" refX="10" refY="3" markerWidth="10" markerHeight="6" markerUnits="userSpaceOnUse" orient="auto-start-reverse"><path d="M0 0 10 3 0 6z" fill="#4a6cc4"/></marker>
            <marker id="al" viewBox="0 0 10 6" refX="10" refY="3" markerWidth="10" markerHeight="6" markerUnits="userSpaceOnUse" orient="auto-start-reverse"><path d="M0 0 10 3 0 6z" fill="#6f97cc"/></marker>
          </defs>
          <g transform="translate(-390 -230)">
            <!-- dimensions -->
            <g class="dl">
              <path d="M758 352h75M976 352h110M833 352v102M976 352v56M852 423h45M1034 342h160M1086 342v187M1204 342v49M1324 342v49M1442 342v49M1038 487v42M1038 487h31"/>
              <path d="M879 354v69" marker-start="url(#al)" marker-end="url(#al)"/>
              <path d="M976 388h110" marker-start="url(#al)" marker-end="url(#al)"/>
              <path d="M1204 374h120" marker-start="url(#al)" marker-end="url(#al)"/>
              <path d="M1442 374h120" marker-start="url(#al)" marker-end="url(#al)"/>
              <path d="M1052 342v145" marker-start="url(#al)" marker-end="url(#al)"/>
              <path d="M1067 383v-35" marker-end="url(#al)"/>
              <path d="M1038 510h48" marker-start="url(#al)" marker-end="url(#al)"/>
              <path d="M815 518 876 437" marker-start="url(#al)" marker-end="url(#al)"/>
              <path d="M803 450h78M833 438q20 14 38-2M852 423v42M852 423l-18 28M852 423l22 25"/>
            </g>
            <g class="dd-line">
              <path d="M776 230v122" marker-end="url(#ah)"/>
              <path d="M867 318 932 252" marker-end="url(#ah)"/>
              <path d="M833 384h143" marker-start="url(#ah)" marker-end="url(#ah)"/>
              <path d="M1086 379h476" marker-start="url(#ah)" marker-end="url(#ah)"/>
              <path d="M1562 342v53"/>
              <path d="M1309 310 1274 236" marker-end="url(#ah)"/>
              <path d="M1288 230l5 20"/>
              <path d="M996 543 1080 431" marker-start="url(#ah)" marker-end="url(#ah)"/>
              <path d="M1012 522 1064 452" marker-start="url(#ah)" marker-end="url(#ah)"/>
            </g>
            <rect x="791" y="310" width="85" height="84" fill="#5f87aa" fill-opacity=".5" stroke="#1583e0" stroke-width="2"/>
            <!-- orange preview rectangle -->
            <rect x="776" y="448" width="476" height="118" fill="none" stroke="#eda556" stroke-width="2"/>
            <!-- sketch curves -->
            <g class="crv">
              <path d="M833 230v122h143A143 143 0 0 0 833 209"/>
              <path class="thin" d="M833 285h68v67"/>
              <path d="M1086 343a238 238 0 0 1 476 0z"/>
              <path d="M1205 343a119 119 0 0 1 238 0"/>
              <circle cx="845" cy="477" r="54"/>
              <path d="M852 423 799 505h94z"/>
              <circle cx="1038" cy="487" r="71"/>
              <circle cx="1038" cy="487" r="47"/>
            </g>
            <g fill="#1010e6">
              <circle cx="976" cy="352" r="4"/><circle cx="1205" cy="343" r="3"/><circle cx="1324" cy="343" r="4"/><circle cx="1442" cy="343" r="3"/><circle cx="1562" cy="343" r="4"/>
              <circle cx="852" cy="423" r="4"/><circle cx="799" cy="505" r="4"/><circle cx="893" cy="505" r="4"/><circle cx="845" cy="477" r="3"/><circle cx="1038" cy="487" r="4"/>
              <path d="M830 229h6v5h-6zM829 348h8v8h-8zM950 349l13 3-13 3zM835 504h20v4h-20zM1315 341h18v4h-18z"/>
            </g>
            <path d="m970 347 8 9m0-9-8 9" stroke="#14208c"/>
            <!-- datum axes -->
            <path d="M833 348v-60" stroke="#27853a" stroke-width="4"/><path d="m828 290 5-19 5 19z" fill="#27853a"/>
            <path d="m830 256 3 4 3-4m-3 4v5" fill="none" stroke="#4a6a50"/>
            <path d="M837 352h60" stroke="#e5432e" stroke-width="4"/><path d="m895 347 19 5-19 5z" fill="#e5432e"/>
            <path d="m919 347 7 10m0-10-7 10" stroke="#e5432e" stroke-width="1.300"/>
            <!-- dimension labels -->
            <g class="dt">
              <text transform="translate(770 303) rotate(-90)">P1:30.0</text>
              <text transform="translate(864 314) rotate(-47)">RP2:30.0</text>
              <text x="883" y="379">P0:30.0</text>
              <text x="1299" y="373">P3:100.0</text>
              <text transform="translate(1294 264) rotate(66)">RP5:25.0</text>
              <text transform="translate(1292 231) rotate(74)">0.0</text>
              <text transform="translate(1026 492) rotate(-57)">Ø P8:30.0</text>
            </g>
            <g class="dt lt">
              <text x="1024" y="383">23</text>
              <text x="1257" y="368">25</text>
              <text x="1495" y="368">25</text>
              <text x="1044" y="505">9.9</text>
              <text transform="translate(1046 422) rotate(-90)">30.4</text>
              <text transform="translate(842 476) rotate(-57)">Ø 26</text>
              <text x="836" y="434">48.8</text>
              <text transform="translate(876 518) rotate(-57)">60°</text>
            </g>
            <!-- view triad -->
            <path d="M453 906h25v25h-25z" fill="#d3d4d6" stroke="#a9aaac"/>
            <path d="M452 932v-32" stroke="#27853a" stroke-width="2"/><path d="m449 903 3-13 3 13z" fill="#27853a"/>
            <path d="M452 932h30" stroke="#d8402e" stroke-width="2"/><path d="m480 929 14 3-14 3z" fill="#d8402e"/>
            <path d="M448 928h8v8h-8z" fill="#1b46c8"/>
            <path d="m449 881 3 4 3-4m-3 4v5" fill="none" stroke="#27853a"/><path d="m496 928 7 8m0-8-7 8" stroke="#d8402e"/>
          </g>
        </svg>
      </div>
    </section>
  </main>

  <!-- Status bar -->
  <footer class="status">
    <span>选择一个点以创建矩形</span>
    <div class="status-icons"><svg class="i16"><use href="#finish"/></svg><svg class="i16"><use href="#fs"/></svg></div>
  </footer>

  <!-- Taskbar -->
  <footer class="taskbar">
    <div></div>
    <div class="apps">
      <button aria-label="开始"><svg class="i32" viewBox="0 0 32 32"><path d="M2 2h13v13H2zM17 2h13v13H17zM2 17h13v13H2zM17 17h13v13H17z" fill="#0f7fd8"/></svg></button>
      <button aria-label="文件资源管理器"><svg class="i32" viewBox="0 0 32 32"><path d="M1 4h11l3 4h16v21H1z" fill="#e59a1a"/><path d="M1 11h30v18H1z" fill="#f9bb35"/><path d="M6 29v-5q0-2 2-2h16q2 0 2 2v5z" fill="#1877c9"/></svg></button>
      <button aria-label="桌面宠物"><svg class="i32" viewBox="0 0 32 32"><path d="m14 6 6 5 8 1-4 7 2 9-9-2-10 3 1-9-4-8 8-1z" fill="#f7de7a" stroke="#dcb84a"/><path d="M11 18q5 6 10 0M12 14v2M20 14v2" fill="none" stroke="#6a4a20" stroke-width="1.500"/></svg></button>
      <button aria-label="Player"><svg class="i32" viewBox="0 0 32 32"><path d="M1 1h30v30H1z" fill="#e8b90c"/><path d="M20 5a7 7 0 1 0 0 12v-4a3 3 0 1 1 0-4z" fill="#fff"/><text x="16" y="27" class="player">Player</text></svg></button>
      <button class="run" aria-label="WPS"><svg class="i32" viewBox="0 0 32 32"><path d="M2 6h8l3 13 5-11 3 11 4-13h6L23 27h-4l-3-8-4 8H9z" fill="#e2401f"/></svg></button>
      <button class="run" aria-label="录屏"><svg class="i32" viewBox="0 0 32 32"><circle cx="16" cy="16" r="13.500" fill="#0b0b0b" stroke="#fff" stroke-width="1.500"/><circle cx="16" cy="16" r="8" fill="#f02a1e"/></svg></button>
      <button class="run" aria-label="浏览器"><svg class="i32" viewBox="0 0 32 32"><circle cx="16" cy="17" r="12" fill="#1d83d8"/><path d="M9 10q8-6 14 1-3 6-9 3z" fill="#6fc3f4"/><path d="M4 26q-3 6 10 0T30 8q2-5-4-3" fill="none" stroke="#eea63a" stroke-width="2.500"/></svg></button>
      <button class="run" aria-label="NX"><svg class="i32" viewBox="0 0 32 32"><path d="M6 4h18v14H6z" fill="#2a62b8"/><path d="m2 19 4-3h20l4 3v9l-27 2z" fill="#1d74dc"/><path d="M3 20h27" stroke="#9cc8f4" stroke-width="1.500"/><path d="M14 6h9v9h-9z" fill="#d6e4f6"/><path d="M26 2v8" stroke="#333" stroke-width="2"/></svg></button>
    </div>
    <div class="tray">
      <svg width="14" height="14" viewBox="0 0 14 14"><path d="m1 10 6-6 6 6" fill="none" stroke="#222" stroke-width="1.700"/></svg>
      <svg class="mic" width="14" height="20" viewBox="0 0 14 20"><rect x="4" y="1" width="6" height="11" rx="3" fill="#cfe0f4" stroke="#2a5aa8" stroke-width="1.500"/><path d="M1 9q0 6 6 6t6-6M7 15v4" fill="none" stroke="#2a5aa8" stroke-width="1.500"/></svg>
      <span class="ime">英</span>
      <span class="ime">拼</span>
      <svg class="net" width="20" height="20" viewBox="0 0 20 20"><path d="M12 2H3q-2 0-2 2v9q0 2 2 2h11q2 0 2-2v-2M5 19h9M8 15v4M12 15v4M14 1h5v6h-5zM16 7v12" fill="none" stroke="#222" stroke-width="1.300"/></svg>
      <svg width="20" height="20" viewBox="0 0 20 20"><path d="M1 8v5h3l5 4V4L4 8zM12 7q2 3 0 7M14 5q4 5 0 11M17 4q4 6 0 13" fill="none" stroke="#222" stroke-width="1.300"/></svg>
      <svg width="20" height="20" viewBox="0 0 20 20"><path d="M1 6h15q2 0 2 2v6q0 2-2 2H3q-2 0-2-2zM18 9h2v4h-2z" fill="#222"/><path d="M5 1 1 8h3l-2 4 6-6H5l2-5z" fill="#222" stroke="#e2efd9" stroke-width=".7"/></svg>
      <div class="clock"><div>16:33</div><div>2024/9/8</div></div>
      <svg width="20" height="20" viewBox="0 0 20 20"><path d="M12 2Q4 2 4 9q0 4-2 6h14q-1-2-1-4M7 15q2 4 5 0M8 7h4l-4 4h4M14 2h4l-4 4h4" fill="none" stroke="#222" stroke-width="1.300"/></svg>
    </div>
  </footer>

  <!-- Rectangle dialog -->
  <section class="dlg">
    <header><svg class="i16"><use href="#gear"/></svg><h2>矩形</h2><button aria-label="关闭"><svg class="ix" viewBox="0 0 10 10"><path d="m0 0 10 10M10 0 0 10" stroke="#fff" stroke-width="1.500"/></svg></button></header>
    <div class="dlg-body">
      <div class="dlg-box">
        <h3>矩形方法</h3>
        <div class="opts">
          <button class="on" aria-label="按 2 点"><svg class="i30" viewBox="0 0 32 32"><path d="M8 13h16v11H8z" fill="none" stroke="#101c6c" stroke-width="1.300"/><circle cx="8" cy="13" r="2" fill="#e02a1a"/><circle cx="24" cy="24" r="2" fill="#e02a1a"/><text x="3" y="10" class="tiny">1</text><text x="25" y="31" class="tiny">2</text></svg></button>
          <button aria-label="按 3 点"><svg class="i30" viewBox="0 0 32 32"><path d="m6 15 15-7 5 8-15 8z" fill="none" stroke="#222" stroke-dasharray="3 1"/><g fill="#e02a1a"><circle cx="6" cy="15" r="2"/><circle cx="21" cy="8" r="2"/><circle cx="11" cy="24" r="2"/></g><text x="3" y="12" class="tiny">2</text><text x="24" y="10" class="tiny">3</text><text x="5" y="30" class="tiny">1</text></svg></button>
          <button aria-label="从中心"><svg class="i30" viewBox="0 0 32 32"><path d="m4 17 16-8 5 9-15 9z" fill="none" stroke="#222" stroke-dasharray="3 1"/><g fill="#e02a1a"><circle cx="19" cy="9" r="2"/><circle cx="22" cy="15" r="2"/><circle cx="15" cy="18" r="2"/></g><text x="12" y="9" class="tiny">3</text><text x="25" y="14" class="tiny">2</text><text x="9" y="24" class="tiny">1</text></svg></button>
        </div>
      </div>
      <div class="dlg-box">
        <h3>输入模式</h3>
        <div class="opts">
          <button>XY</button>
          <button class="on" aria-label="参数模式"><svg class="i30" viewBox="0 0 32 32"><path d="M5 8v11M26 8v11M5 13h21" stroke="#101c6c" stroke-width="1.200"/><path d="m5 13 5-2v4zM26 13l-5-2v4z" fill="#101c6c"/><path d="M5 23h21" stroke="#444" stroke-width="2"/><text x="13" y="10" class="tiny">x</text></svg></button>
        </div>
      </div>
    </div>
  </section>

  <!-- On-screen input -->
  <form class="osi">
    <span class="grip"></span>
    <div class="osi-fields">
      <label for="w">宽度</label><input id="w" class="sel" type="text" value="100">
      <label for="h">高度</label><input id="h" type="text" value="25">
    </div>
  </form>

  <!-- Pen ink -->
  <svg class="ink" viewBox="0 0 1200 750" aria-label="Tab">
    <g fill="none" stroke="#f01e0a" stroke-width="9" stroke-linecap="round" stroke-linejoin="round">
      <path d="M85 235 245 241H404M314 244 309 300 298 348 291 410 283 450 274 535 248 642 233 682 232 700"/>
      <path d="M616 361 612 347 598 346 582 355 549 388 505 450 484 512 475 560 475 575 490 592 528 599 562 595 592 574 618 528 635 410 648 346 649 530 658 615 668 642 684 653 713 656"/>
      <path d="M888 61 893 110 898 185V660L888 693 888 625 900 560 920 500 938 470 956 454H992L1020 480 1055 525 1070 550 1078 585V632L1066 654 1035 672 990 688 930 694 790 697"/>
    </g>
    <path d="m779 177 18 0 38 40-15 16-40-39z" fill="#fff" stroke="#111" stroke-width="3"/><path d="m787 190 34 36M795 184l34 36" stroke="#333" stroke-width="2"/>
  </svg>

  <!-- Recorder bar -->
  <div class="rec">
    <svg width="14" height="16"><path d="M0 2h14M0 8h14M0 14h14" stroke="#aeb1b5" stroke-width="1.500"/></svg>
    <svg class="rec-pin" width="12" height="18" viewBox="0 0 12 18"><path d="M2 1h8v2H9v5l3 3H0l3-3V3H2z" fill="#5a9fe0"/><path d="M6 11v6" stroke="#5a9fe0" stroke-width="1.500"/></svg>
    <span class="res">1920x1080</span>
    <span class="time">正在录制 [00:01:07]</span>
    <span class="under"><mark>N</mark>X 1<mark>2</mark> - 建</span>
    <svg class="cam" width="20" height="16" viewBox="0 0 20 16"><path d="M1 3h4l2-2h6l2 2h4v12H1z" fill="#dfe1e3"/><circle cx="10" cy="9" r="4.500" fill="none" stroke="#4a4d52" stroke-width="2"/></svg>
    <span class="bar"></span>
    <svg width="18" height="18" viewBox="0 0 18 18"><path d="m1 17 1-6L12 1l5 4L7 16z" fill="#66a9ee"/><path d="m2 11 5 5M10 3l5 5" stroke="#2f6fc0"/></svg>
    <span class="bar"></span>
    <svg width="12" height="12" viewBox="0 0 12 12"><path d="m0 0 12 12M12 0 0 12" stroke="#bcbfc3" stroke-width="1.300"/></svg>
  </div>

  <!-- Annotation palette -->
  <div class="pal">
    <button class="x" aria-label="关闭"><svg class="i12" viewBox="0 0 12 12"><path d="m1 1 10 10M11 1 1 11" stroke="#b9bcc2"/></svg></button>
    <button aria-label="选择"><svg class="i24" viewBox="0 0 24 24"><path d="M6 2v18l4-4 4 7 3-2-3-6h5z" fill="#e4e6ea"/></svg></button>
    <button class="on" aria-label="铅笔"><svg class="i24" viewBox="0 0 24 24"><path d="m2 22 2-7L17 2l5 5L9 20z" fill="#fff"/><path d="m6 15 11-10M9 18 20 7" stroke="#3a97f5"/></svg></button>
    <button aria-label="荧光笔"><svg class="i24" viewBox="0 0 24 24"><path d="m9 10 8-8 6 6-8 8zM6 13l2-2 6 6-2 2zM1 23v-4l4-4 4 4-4 4z" fill="#d9dbe0"/></svg></button>
    <button aria-label="直线"><svg class="i24" viewBox="0 0 24 24"><path d="M3 21 21 3" stroke="#d9dbe0" stroke-width="3"/></svg></button>
    <button aria-label="箭头"><svg class="i24" viewBox="0 0 24 24"><path d="M8 16 21 4" stroke="#d9dbe0" stroke-width="2.500"/><path d="m2 22 5-12 7 8z" fill="#d9dbe0"/></svg></button>
    <button aria-label="矩形"><svg class="i24" viewBox="0 0 24 24"><path d="M2 5h20v14H2z" fill="none" stroke="#d9dbe0" stroke-width="1.500"/></svg></button>
    <button aria-label="编号"><svg class="i24" viewBox="0 0 24 24"><g fill="#d9dbe0"><circle cx="7" cy="7" r="6"/><circle cx="18" cy="9" r="5"/><circle cx="10" cy="17" r="6"/></g><g class="num"><text x="5" y="10">1</text><text x="16" y="13">2</text><text x="8" y="21">3</text></g></svg></button>
    <button class="t" aria-label="文字">T</button>
    <button aria-label="橡皮"><svg class="i24" viewBox="0 0 24 24"><path d="M2 16 8 9l7 6-5 6H5z" fill="#d9dbe0"/><path d="m9 8 6-7 7 7-6 7z" fill="#60646b" stroke="#d9dbe0"/><path d="M9 22h9" stroke="#d9dbe0" stroke-width="1.500"/></svg></button>
    <hr>
    <button aria-label="颜色"><span class="swatch"></span></button>
    <button aria-label="线宽"><svg class="i24" viewBox="0 0 24 24"><path d="M2 12h20" stroke="#e6e6e6" stroke-width="3"/></svg></button>
    <hr>
    <button class="half" aria-label="收起"><svg width="26" height="12" viewBox="0 0 26 12"><path d="m0 6 6-5v3h4v4H6v3zM26 6l-6-5v3h-4v4h4v3z" fill="#e6e6e6"/></svg></button>
  </div>

  <!-- Watermarks -->
  <div class="wm wm-mid">东莞市厚街凭良远程职业培训学院</div>
  <div class="wm wm-low"><span>东莞市厚街凭良远程职业培训学校</span><span>技术支持：</span><span class="phone">13724486198</span></div>
</div>

</body>
</html>
```
FILE: styles.css
```css
* {
    box-sizing: border-box;
}

body {
    margin: 0;
    font-family: "Noto Sans", "Noto Sans CJK SC", sans-serif;
    font-size: 14px;
    color: #222;
    background: #fff;
}

button {
    font: inherit;
    color: inherit;
    background: none;
    border: 0;
    padding: 0;
    margin: 0;
}

svg { display: block; flex: none; }

.sprite {
    position: absolute;
    width: 0;
    height: 0;
}

.i12 { width: 12px; height: 12px; }
.i16 { width: 16px; height: 16px; }
.i24 { width: 24px; height: 24px; }
.i30 { width: 30px; height: 30px; }
.i32 { width: 32px; height: 32px; }
.icaret { width: 8px; height: 5px; }
.icaret7 { width: 8px; height: 7px; }
.imenu { width: 24px; height: 20px; }
.ichev { width: 15px; height: 11px; }
.imod { width: 11px; height: 13px; }
.ix { width: 10px; height: 10px; }

.tiny {
    font: 10px "Noto Sans", sans-serif;
    fill: #111;
}

.app {
    position: relative;
    display: flex;
    flex-direction: column;
    height: 100vh;
    overflow: hidden;
}

/* Title bar */
.titlebar {
    display: flex;
    align-items: center;
    height: 31px;
    padding-right: 45px;
}

.tb-group {
    display: flex;
    align-items: center;
    justify-content: space-evenly;
    height: 24px;
    border-right: 1px solid #e0e0e0;
}

.brand {
    width: 47px;
    font-size: 25px;
    font-weight: bold;
    color: #8292a0;
}

.w29 { width: 29px; }
.w32 { width: 32px; }
.w44 { width: 44px; }
.w67 { width: 67px; }
.w98 { width: 98px; }

.ic {
    display: flex;
    align-items: center;
    gap: 5px;
}

.tb-windows {
    display: flex;
    gap: 6px;
    padding-left: 5px;
}

.siemens {
    margin-left: auto;
    font-size: 15px;
    font-weight: 800;
    color: #008592;
}

.winctl {
    display: flex;
    gap: 18px;
    margin-left: 32px;
    width: 34px;
    overflow: hidden;
}

/* Ribbon tabs */
.tabs {
    display: flex;
    align-items: stretch;
    height: 31px;
    padding-right: 45px;
    background: #d9d9d9;
    font-size: 16px;
}

.tab {
    padding: 0 13px;
    line-height: 31px;
}

.tab.file {
    width: 91px;
    margin-right: 2px;
    background: #4b97b8;
    color: #fff;
}

.tab.active {
    background: #fff;
    color: #10637f;
}

.search {
    display: flex;
    align-items: center;
    width: 157px;
    height: 24px;
    margin: 3px 11px 0 auto;
    padding-right: 4px;
    background: #fff;
    border: 1px solid #999;
}

.search input {
    flex: 1;
    min-width: 0;
    border: 0;
    padding: 0 1px;
    font: inherit;
    font-size: 14px;
    background: none;
}

.search input::placeholder { color: #a5a5a5; }

.fs { margin-top: 7px; }

.pin {
    width: 5px;
    margin: 7px 0 0 11px;
}

/* Ribbon */
.ribbon {
    display: flex;
    height: 106px;
    padding: 5px 0 1px;
    border-bottom: 1px solid #ccc;
}

.rg {
    display: flex;
    flex-direction: column;
    justify-content: space-between;
    border-right: 1px solid #ddd;
}

.rg-body {
    display: flex;
    gap: 11px;
    padding: 0 4px 0 12px;
}

.narrow .rg-body { padding: 0 5px; }
.medium .rg-body { padding: 0 12px; }
.last .rg-body { padding-right: 10px; }

.rg-foot {
    display: flex;
    align-items: center;
    height: 20px;
    line-height: 20px;
    color: #0f6482;
}

.rg-foot span {
    flex: 1;
    text-align: center;
}

.rg-foot svg { margin-right: 9px; margin-left: 3px; }

.big {
    display: flex;
    flex-direction: column;
    align-items: center;
    min-width: 32px;
    height: 70px;
}

.big span {
    height: 20px;
    margin: 5px 0;
    line-height: 20px;
}

.big:disabled { color: #b9b9b9; }

.more { width: 38px; }

.more i {
    display: flex;
    align-items: center;
    justify-content: center;
    width: 38px;
    height: 34px;
    border: 1px solid #ddd;
    border-radius: 3px;
}

.more span { margin-top: 3px; }

.gallery-wrap { display: flex; }

.gallery {
    display: grid;
    grid-template-columns: repeat(8, 39px);
    grid-auto-rows: 38px;
    border: 1px solid #d5d5d5;
    width: 312px;
    height: 78px;
    overflow: hidden;
}

.gallery button {
    display: flex;
    align-items: center;
    justify-content: center;
}

.gallery .on {
    background: #cde6ee;
    border: 1px solid #b5d8e4;
}

.gallery-nav {
    display: flex;
    flex-direction: column;
    align-items: center;
    justify-content: space-between;
    width: 20px;
    padding: 11px 0 10px;
}

.up { transform: rotate(180deg); }
.dim { opacity: .4; }

.smalls {
    display: grid;
    grid-template-rows: repeat(3, 26px);
    grid-auto-flow: column;
    column-gap: 10px;
}

.sm {
    display: flex;
    align-items: center;
    gap: 3px;
    height: 18px;
    line-height: 18px;
}

/* Selection bar */
.selbar {
    display: flex;
    align-items: center;
    height: 36px;
    border-bottom: 1px solid #8c8c8c;
}

.menu-btn {
    display: flex;
    align-items: center;
    gap: 5px;
    width: 108px;
    height: 28px;
    padding-left: 10px;
    border-right: 1px solid #ddd;
}

/* the arrow is made of two half triangles */
.dd {
    appearance: none;
    width: 167px;
    height: 24px;
    margin-left: 12px;
    padding: 0 2px;
    border: 1px solid #999;
    border-radius: 0;
    font: inherit;
    color: #222;
    background-color: #fff;
    background-image: linear-gradient(to bottom left, #111 50%, transparent 51%), linear-gradient(to bottom right, #111 50%, transparent 51%);
    background-size: 5px 6px;
    background-position: right 11px center, right 6px center;
    background-repeat: no-repeat;
}

.dd.wide {
    width: 176px;
    margin-left: 8px;
}

.tools {
    display: flex;
    align-items: center;
    padding-left: 5px;
}

.tools button {
    display: flex;
    align-items: center;
    justify-content: center;
    width: 31px;
    height: 30px;
    margin: 0 1px;
}

.tools .cr {
    width: 12px;
    margin: 0;
}

.tools .on {
    background: #cfe5ec;
    border: 1px solid #b9d3dc;
}

.view-tools {
    height: 28px;
    margin-left: 8px;
    padding: 0 8px;
    border-left: 1px solid #ddd;
    border-right: 1px solid #ddd;
}

.view-tools .cr { width: 14px; }

/* Main area */
.main {
    display: flex;
    flex: 1;
    min-height: 0;
}

.resbar {
    display: flex;
    flex-direction: column;
    width: 32px;
    background: #dadada;
    border-right: 1px solid #a8a8a8;
}

.resbar button {
    display: flex;
    align-items: center;
    justify-content: center;
    height: 42px;
    padding-left: 4px;
}

.resbar .gear {
    height: 24px;
    margin-bottom: 18px;
    padding: 0;
}

.resbar .current {
    margin: 0 -1px 0 2px;
    padding-left: 2px;
    background: #fff;
    border: 1px solid #aaa;
    border-right: 0;
}

.resbar .spaced { margin-top: 12px; }

.nav {
    display: flex;
    flex-direction: column;
    width: 358px;
    padding: 0 10px 6px 7px;
    border-right: 1px solid #888;
}

.nav-title {
    display: flex;
    align-items: center;
    justify-content: space-between;
    height: 32px;
    padding: 0 6px 0 3px;
    font-size: 15px;
}

.maxi {
    width: 14px;
    height: 13px;
    border: 1px solid #111;
    border-top-width: 2px;
}

.tree-box {
    display: flex;
    flex-direction: column;
    flex: 1;
    min-height: 0;
    border: 1px solid #ccc;
    border-top: 2px solid #ddd;
}

.tree-rows {
    flex: 1;
    min-height: 0;
    overflow: hidden;
    background:
        linear-gradient(#e4e4e4, #e4e4e4) 199px 0 / 1px 100% no-repeat,
        linear-gradient(#e4e4e4, #e4e4e4) 299px 0 / 1px 100% no-repeat,
        repeating-linear-gradient(#f8f8f8 0 23px, #e6e6e6 23px 24px, #fff 24px 47px, #e6e6e6 47px 48px);
}

.tree {
    width: 100%;
    table-layout: fixed;
    border-collapse: collapse;
    font-size: 15px;
}

.c1 { width: 200px; }
.c2 { width: 100px; }

.tree th {
    height: 24px;
    padding: 0 6px;
    font-weight: normal;
    line-height: 23px;
    text-align: left;
    white-space: nowrap;
    background: #ebebeb;
    border-right: 1px solid #d5d5d5;
    border-bottom: 1px solid #ccc;
}

.sort {
    display: inline-block;
    width: 12px;
    height: 7px;
    margin: 0 0 3px 18px;
}

.tree td {
    height: 24px;
    padding: 0;
    line-height: 22px;
}

.node {
    display: flex;
    align-items: center;
    gap: 4px;
    padding-left: 4px;
    white-space: nowrap;
}

.ex {
    width: 11px;
    height: 11px;
    border: 1px solid #ccc;
    background: #fff;
    font-size: 14px;
    line-height: 9px;
    text-align: center;
}

.ex.none {
    height: 1px;
    border: 0;
    border-top: 1px dotted #aaa;
}

.sub {
    gap: 3px;
    padding-left: 40px;
}

.sub input {
    appearance: none;
    width: 12px;
    height: 12px;
    margin: 0;
    border: 1px solid #111;
}

.sub input:checked::before {
    content: "";
    display: block;
    width: 10px;
    height: 10px;
    background: #1ba038;
    clip-path: polygon(0 50%, 25% 35%, 42% 58%, 90% 0, 100% 15%, 50% 100%, 35% 100%);
}

.state { margin-left: 6px; }

.hscroll {
    height: 20px;
    padding: 7px 68px 0 21px;
    background: #ededed;
}

.thumb {
    height: 6px;
    background: #858585;
}

.splitter {
    height: 5px;
    margin-top: 1px;
    background: #d4d4d4;
    border: 1px solid #999;
}

.fold {
    display: flex;
    align-items: center;
    justify-content: space-between;
    height: 28px;
    padding: 0 5px 0 6px;
    border-bottom: 2px solid #ccc;
    font-size: 18px;
    color: #1a5f80;
}

/* Graphics window */
.gfx {
    display: flex;
    flex-direction: column;
    flex: 1;
    min-width: 0;
}

.docs {
    display: flex;
    height: 26px;
    border-bottom: 2px solid #4e8fb0;
    font-size: 16px;
    line-height: 24px;
}

.doc {
    display: flex;
    align-items: center;
    gap: 5px;
    padding: 0 4px 0 5px;
}

.doc.active {
    background: #4b97b8;
    color: #e8f5fa;
}

.canvas {
    flex: 1;
    min-height: 0;
    background: linear-gradient(#b0b3b4, #bfc0c1 18%, #cbccce 45%, #dcdddf 68%, #e5e6e8 88%, #e6e7e9);
}

.drawing {
    width: 100%;
    height: 100%;
}

.dl path { fill: none; stroke: #7f9fcb; stroke-width: 1; }
.dd-line path { fill: none; stroke: #4a6cc4; stroke-width: 1; }
.crv * { fill: none; stroke: #1010e6; stroke-width: 2; }
.crv .thin { stroke: #2a2ac8; stroke-width: 1; }

.dt {
    font: 12px "Liberation Mono", monospace;
    fill: #2f4fb4;
}

.lt { fill: #6486c0; }

/* Status bar */
.status {
    display: flex;
    align-items: center;
    justify-content: space-between;
    height: 24px;
    padding: 0 56px 0 3px;
    background: #fff;
    border-top: 1px solid #999;
    border-bottom: 1px solid #999;
    line-height: 20px;
    color: #111;
}

.status-icons {
    display: flex;
    gap: 4px;
}

/* Taskbar */
.taskbar {
    display: grid;
    grid-template-columns: 1fr auto 1fr;
    height: 59px;
    background: #e2efd9;
}

.apps { display: flex; }

.apps button {
    display: flex;
    flex-direction: column;
    align-items: center;
    width: 55px;
    padding-top: 13px;
}

.apps .run::after {
    content: "";
    width: 8px;
    height: 4px;
    margin-top: 4px;
    border-radius: 2px;
    background: #7d8a78;
}

.player {
    font: bold 8px "Noto Sans", sans-serif;
    text-anchor: middle;
    fill: #3a2c00;
}

.tray {
    display: flex;
    align-items: center;
    justify-content: flex-end;
    gap: 10px;
    padding-right: 24px;
    color: #222;
}

.ime {
    margin-right: 20px;
    font-size: 18px;
}

.mic { margin: 0 12px 0 16px; }

.clock {
    margin-left: 10px;
    font-size: 15px;
    line-height: 20px;
    text-align: right;
}

/* Rectangle dialog */
.dlg {
    position: absolute;
    left: 418px;
    top: 378px;
    width: 212px;
    background: #f2f2f2;
}

.dlg header {
    display: flex;
    align-items: center;
    height: 27px;
    padding: 0 11px 0 8px;
    background: #4e9bba;
    color: #fff;
}

.dlg h2,
.dlg h3 {
    margin: 0;
    font-size: 18px;
    font-weight: normal;
}

.dlg h2 {
    flex: 1;
    margin-left: 8px;
}

.dlg-body {
    display: flex;
    gap: 3px;
    padding: 5px 4px 4px;
}

.dlg-box {
    padding: 0 5px 4px;
    background: #fff;
    border-bottom: 1px solid #ddd;
}

.dlg h3 {
    padding: 0 4px;
    line-height: 25px;
    white-space: nowrap;
    color: #10637f;
}

.opts {
    display: flex;
    gap: 2px;
}

.opts button {
    display: flex;
    align-items: center;
    justify-content: center;
    width: 32px;
    height: 32px;
    border: 1px solid #aaa;
    font-size: 18px;
    color: #101c6c;
}

.opts .on {
    background: #7fb9d0;
    border-color: #7fb9d0;
}

/* On-screen input */
.osi {
    position: absolute;
    left: 1057px;
    top: 288px;
    display: flex;
    width: 129px;
    padding: 2px 4px 3px 3px;
    background: #f3f3f3;
    border: 1px solid #bbb;
}

.grip {
    width: 6px;
    border-left: 2px dotted #aaa;
    border-right: 2px dotted #aaa;
}

.osi-fields {
    display: grid;
    grid-template-columns: 32px 1fr;
    flex: 1;
    align-items: center;
    padding-left: 9px;
    font-size: 15px;
}

.osi input {
    width: 100%;
    height: 26px;
    padding: 0 6px;
    border: 1px solid #999;
    font: bold 15px "Noto Sans", sans-serif;
    color: #111;
}

.osi .sel {
    padding: 0 5px;
    border: 2px solid #dfe8f2;
    outline: 1px solid #aaa;
    outline-offset: -1px;
    background: #0a6cd6;
    color: #fff;
}

/* Pen ink */
.ink {
    position: absolute;
    left: 860px;
    top: 580px;
    width: 400px;
    height: 250px;
}

/* Recorder bar */
.rec {
    position: absolute;
    left: 50%;
    top: 0;
    display: flex;
    align-items: center;
    gap: 10px;
    width: 624px;
    height: 31px;
    margin-left: -312px;
    padding: 0 43px 0 41px;
    background: #656870;
    clip-path: polygon(0 0, 100% 0, calc(100% - 30px) 100%, 30px 100%);
    font-size: 15px;
    line-height: 26px;
    color: #f2f2f2;
}

.rec-pin { margin-left: 8px; }
.res { margin-left: 6px; }
.time { margin-left: auto; margin-right: 29px; white-space: nowrap; }
.under { color: #2c2e33; white-space: nowrap; }

.under mark {
    padding: 1px;
    background: #d9625a;
    color: #5c1512;
}

.cam { margin-left: -12px; }

.bar {
    width: 1px;
    height: 12px;
    background: #85888e;
}

/* Annotation palette */
.pal {
    position: absolute;
    right: 0;
    top: 0;
    display: flex;
    flex-direction: column;
    align-items: center;
    gap: 4px;
    width: 45px;
    height: 471px;
    overflow: hidden;
    background: linear-gradient(#20262f, #262b37 90%, #000 92%);
}

.pal button {
    display: flex;
    flex: none;
    align-items: center;
    justify-content: center;
    width: 32px;
    height: 32px;
    margin-right: 1px;
    background: #12151c;
    border: 1px solid #4a4e56;
}

.pal .x {
    align-self: flex-end;
    height: 27px;
    width: 29px;
    margin: 0;
    background: none;
    border: 0;
}

.pal .on {
    margin-top: 5px;
    background: #3a97f5;
    border-color: #3a97f5;
}

.pal .t {
    font: 28px "Liberation Serif", serif;
    color: #d9dbe0;
}

.pal hr {
    width: 100%;
    margin: 2px 0 3px;
    border: 0;
    border-top: 1px solid #4a4e56;
}

.pal .half { height: 20px; }

.num text {
    font: bold 9px "Liberation Sans", sans-serif;
    fill: #12151c;
}

.swatch {
    width: 20px;
    height: 20px;
    background: #fc1b05;
    border: 1px solid #eee;
}

/* Watermarks */
.wm {
    position: absolute;
    white-space: nowrap;
    color: #fff;
    pointer-events: none;
}

.wm-mid {
    left: 499px;
    top: 497px;
    font-size: 60px;
    line-height: 70px;
    color: #eee;
    opacity: .26;
    text-shadow: -2px 0 1px #555, 2px 0 1px #555, 0 -2px 1px #555, 0 2px 1px #555, 5px 6px 3px #777;
}

.wm-low {
    left: 252px;
    top: 985px;
    display: flex;
    gap: 34px;
    font-size: 51px;
    line-height: 70px;
    text-shadow: -2px 0 1px #666, 2px 0 1px #666, 0 -2px 1px #666, 0 2px 1px #666, -1px -1px 1px #666, 2px 2px 1px #666, 6px 6px 3px rgba(70, 80, 70, .45);
}

.wm-low .phone {
    margin-left: -20px;
    font-size: 53px;
}
```
